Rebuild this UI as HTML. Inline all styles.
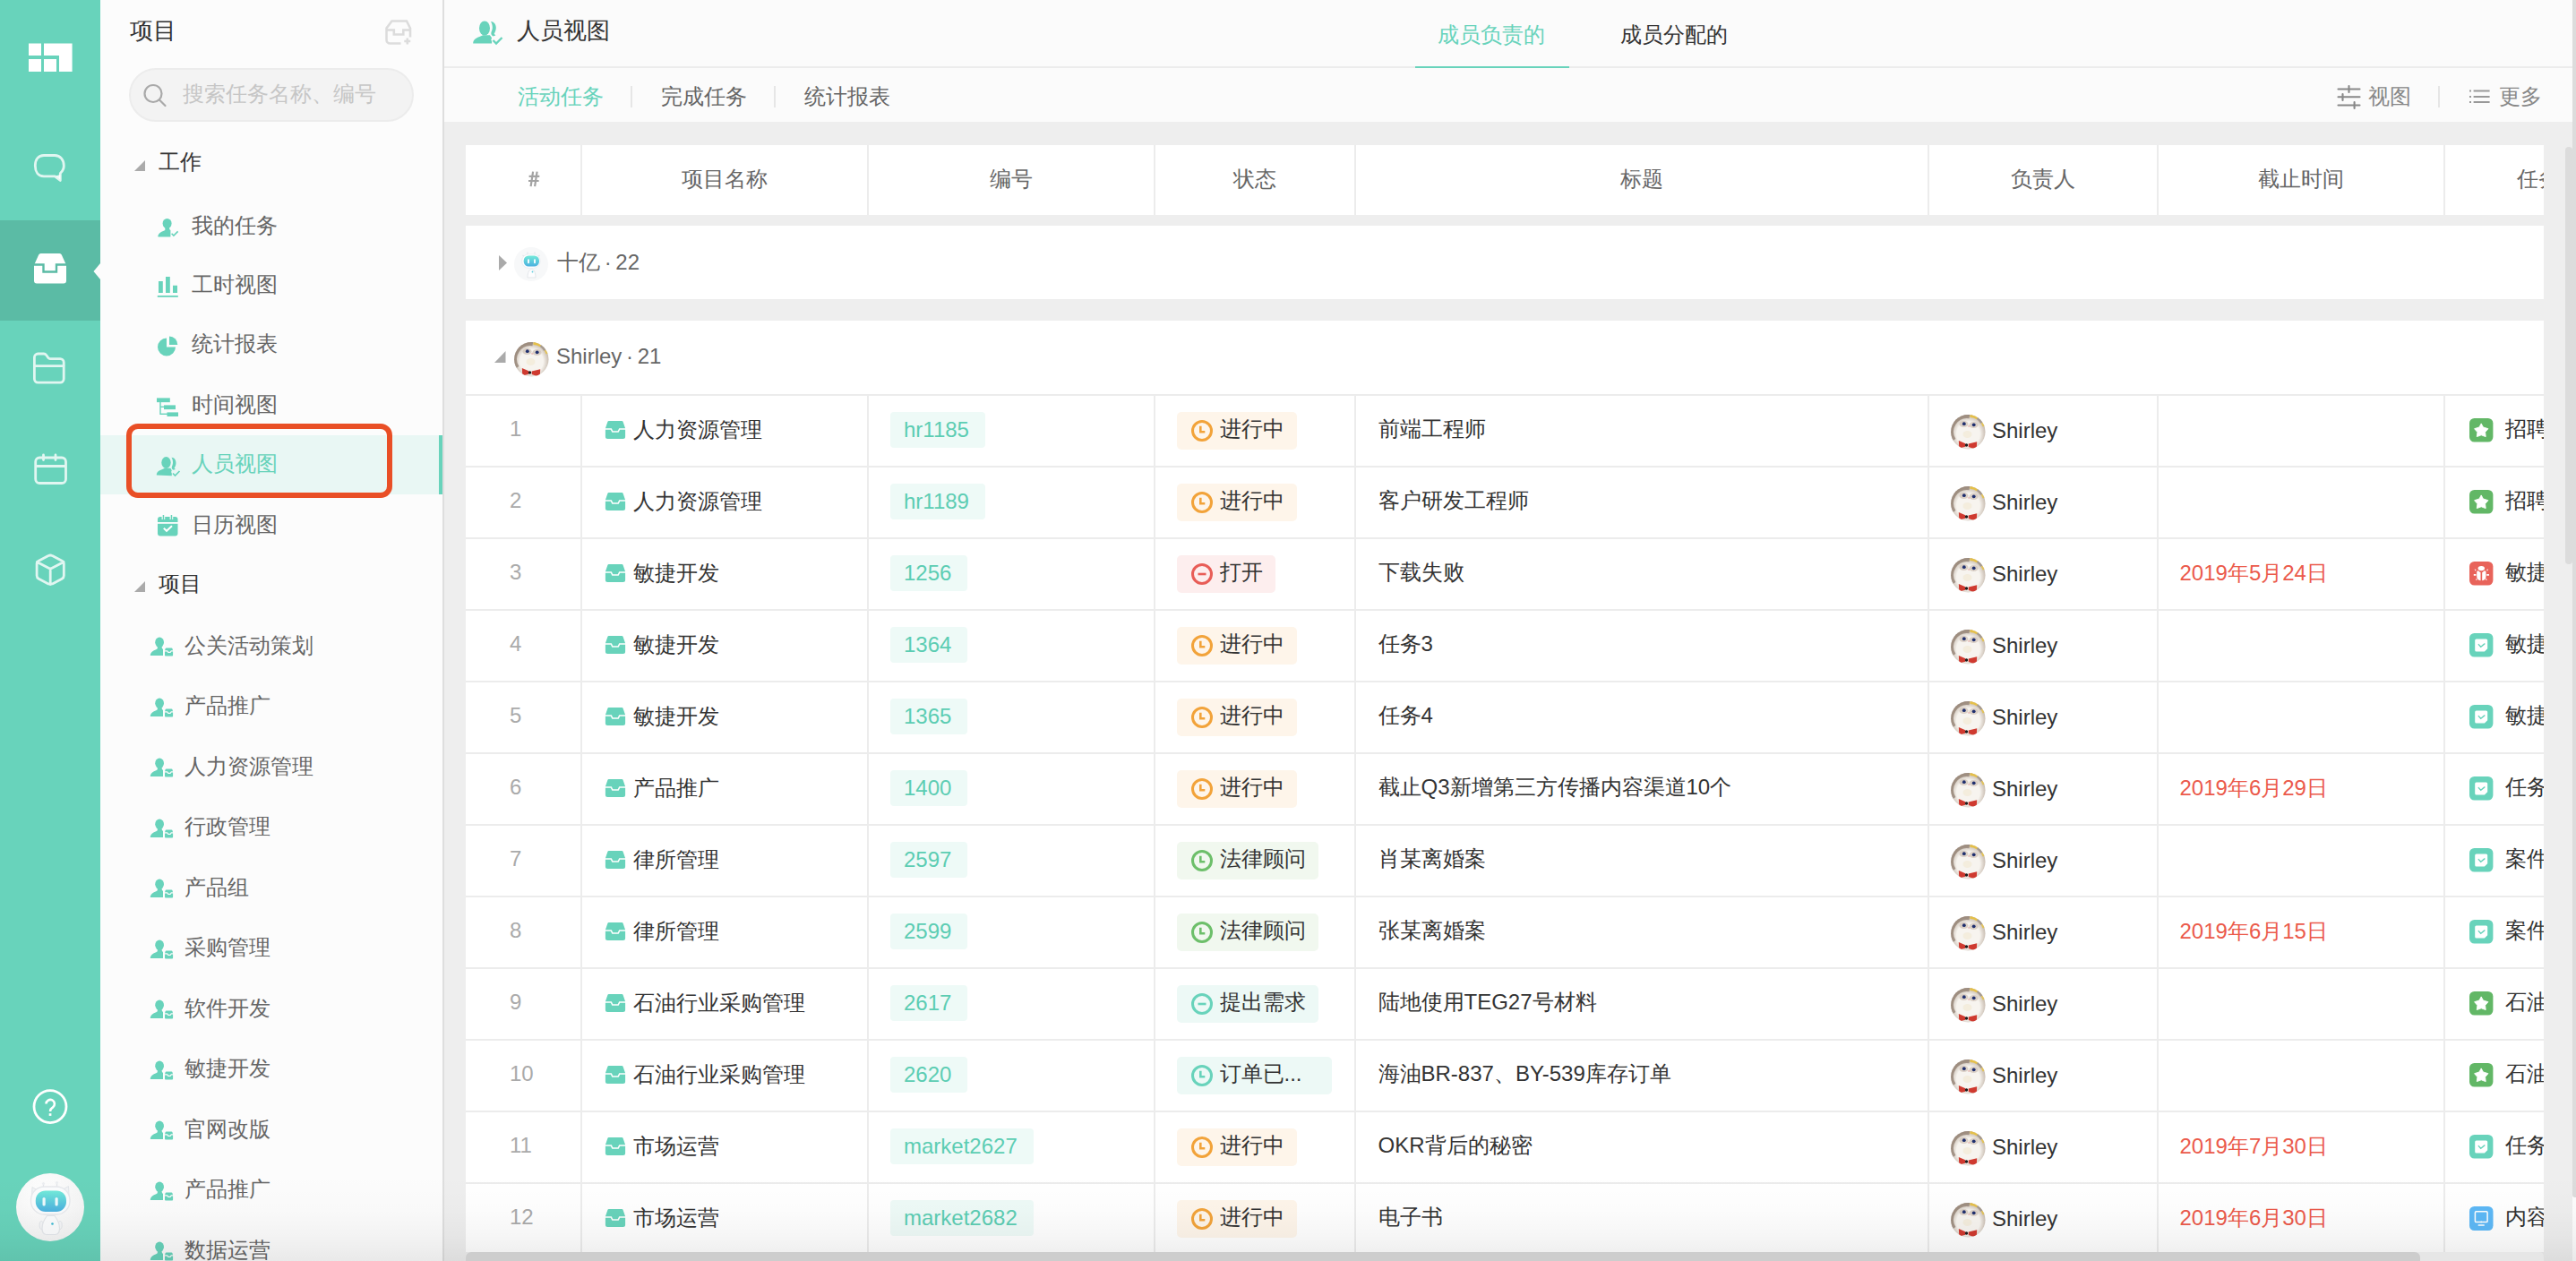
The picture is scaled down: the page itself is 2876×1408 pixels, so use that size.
<!DOCTYPE html><html><head><meta charset="utf-8"><style>
*{box-sizing:border-box;margin:0;padding:0}
html,body{width:2876px;height:1408px;overflow:hidden;background:#fcfcfc;font-family:"Liberation Sans",sans-serif;color:#333}
.a{position:absolute}
.t24{font-size:24px;line-height:22px;white-space:nowrap}
.t26{font-size:26px;line-height:26px;white-space:nowrap}
svg{position:absolute;overflow:visible}
</style></head><body>

<div class="a" style="left:0;top:0;width:112px;height:1408px;background:#68d3bb"></div>
<div class="a" style="left:0;top:246px;width:112px;height:112px;background:#5bbba5"></div>
<svg style="left:0;top:0" width="2876" height="1408"><polygon points="112,294 104.5,303 112,312" fill="#fcfcfc"/></svg>
<svg style="left:0;top:0" width="112" height="1408" fill="#fff">
<rect x="32" y="48.5" width="14" height="13.5"/><rect x="32" y="66" width="14" height="14"/>
<rect x="49" y="66" width="14" height="14"/><path d="M49 48.5H80.6V80H66V62H49Z"/>
</svg>
<svg style="left:0;top:0" width="112" height="1408"><path stroke="#fff" stroke-opacity="0.8" fill="none" stroke-width="2.8" stroke-linejoin="round" stroke-linecap="round" d="M49 173.5H61C67.5 173.5 71.3 178.5 71.3 185C71.3 188.5 70 191 67.3 193.5V201.5L61.3 196.8H49C42.5 196.8 39.3 191.5 39.3 185C39.3 178.5 42.5 173.5 49 173.5Z"/><path d="M62 196.5L67.3 200.5V195z" fill="#fff" fill-opacity="0.85"/></svg>
<svg style="left:0;top:0" width="112" height="1408"><path fill="#fff" d="M45.5 283h21a2.5 2.5 0 0 1 2.3 1.6l5.2 11.4v17.5a3 3 0 0 1-3 3h-30a3 3 0 0 1-3-3v-17.5l5.2-11.4a2.5 2.5 0 0 1 2.3-1.6z"/><path d="M37 295.5h11.5v8h14.5v-8h12" stroke="#5bbba5" stroke-width="2.4" fill="none"/></svg>
<svg style="left:0;top:0" width="112" height="1408"><path stroke="#fff" stroke-opacity="0.8" fill="none" stroke-width="2.8" stroke-linejoin="round" stroke-linecap="round" d="M38.4 399a4 4 0 0 1 4-4h6.5c1.3 0 2 .5 2.8 1.5l2.3 3.2c.5.6 1 .9 1.8.9h11.4a4 4 0 0 1 4 4v18.5a4 4 0 0 1-4 4h-24.8a4 4 0 0 1-4-4z M38.4 408.6h33"/></svg>
<svg style="left:0;top:0" width="112" height="1408"><path stroke="#fff" stroke-opacity="0.8" fill="none" stroke-width="2.8" stroke-linejoin="round" stroke-linecap="round" d="M39.7 515.5a4.5 4.5 0 0 1 4.5-4.5h24.8a4.5 4.5 0 0 1 4.5 4.5v19.5a4.5 4.5 0 0 1-4.5 4.5h-24.8a4.5 4.5 0 0 1-4.5-4.5z M39.7 520.5h33.5 M48.5 508v5.5 M62 508v5.5"/></svg>
<svg style="left:0;top:0" width="112" height="1408"><path stroke="#fff" stroke-opacity="0.8" fill="none" stroke-width="2.8" stroke-linejoin="round" stroke-linecap="round" d="M54 620.6a4.5 4.5 0 0 1 4.4 0l11.3 6a3 3 0 0 1 1.6 2.6v13.6a4 4 0 0 1-2.1 3.5l-10.8 5.6a4.5 4.5 0 0 1-4.4 0l-10.8-5.6a4 4 0 0 1-2.1-3.5v-13.6a3 3 0 0 1 1.6-2.6z M41.3 627.5l14.9 7.8l14.9-7.8 M56.2 635.3v16.2"/></svg>
<svg style="left:0;top:0" width="112" height="1408"><circle cx="56" cy="1235.6" r="18" stroke="#fff" stroke-width="2.8" fill="none"/><path d="M51.5 1232.6a4.7 4.7 0 1 1 7.5 3.8c-1.9 1.3-2.9 2.1-2.9 4v.6" stroke="#fff" stroke-width="2.6" fill="none"/><rect x="54.7" y="1243.2" width="2.7" height="2.7" fill="#fff"/></svg>
<svg style="left:0;top:0" width="112" height="1408"><defs><linearGradient id="vis2" x1="0" y1="0" x2="0" y2="1"><stop offset="0" stop-color="#72e9d9"/><stop offset="1" stop-color="#4cb0df"/></linearGradient><radialGradient id="rb" cx="40%" cy="35%" r="70%"><stop offset="0" stop-color="#ffffff"/><stop offset="1" stop-color="#f3f3f3"/></radialGradient></defs>
<circle cx="56" cy="1348" r="38" fill="url(#rb)"/>
<path d="M48.5 1327v-4.5M63.5 1326v-4.5" stroke="#e2e5e9" stroke-width="1.3"/><circle cx="48.5" cy="1321.5" r="1.6" fill="#eceef1"/><circle cx="63.5" cy="1320.5" r="1.6" fill="#eceef1"/>
<path d="M35.5 1336l0.5-10.5l8.5 5z" fill="#f1f3f5" stroke="#e3e6ea" stroke-width="1"/><path d="M77 1335l-0.5-10.5l-8.5 5z" fill="#f1f3f5" stroke="#e3e6ea" stroke-width="1"/>
<rect x="34.5" y="1325" width="43.5" height="31" rx="15" fill="#fbfcfd" stroke="#e6e8ec" stroke-width="1.3"/>
<rect x="39.8" y="1329.4" width="34.2" height="23.6" rx="11" fill="url(#vis2)"/>
<rect x="47.5" y="1337" width="3.2" height="9.5" rx="1.6" fill="#eefafc"/><rect x="61.5" y="1337" width="3.2" height="9.5" rx="1.6" fill="#eefafc"/>
<ellipse cx="46.3" cy="1368" rx="2.2" ry="4.5" fill="#f4f5f7" stroke="#e3e6ea" stroke-width="1"/><ellipse cx="67" cy="1368" rx="2.2" ry="4.5" fill="#f4f5f7" stroke="#e3e6ea" stroke-width="1"/>
<path d="M52.5 1357.5h8.5c3 4 5.5 9 5.5 14c0 4.5-2 7-5 7h-9.5c-3 0-5-2.5-5-7c0-5 2.5-10 5.5-14z" fill="#fbfcfd" stroke="#e3e6ea" stroke-width="1.2"/>
<circle cx="58.5" cy="1366.5" r="1.3" fill="#3bb8d2"/>
</svg>
<div class="a" style="left:494px;top:0;width:2px;height:1408px;background:#dedede"></div>
<div class="a t26" style="left:145px;top:20.5px;color:#333">项目</div>
<svg style="left:0;top:0" width="500" height="200"><path d="M431.5 41v-9.5l6-8h16.5l4 8v10 M431.5 41v3.5a4 4 0 0 0 4 4h12" stroke="#dcdcdc" stroke-width="2.6" fill="none"/><path d="M432 33.5h7.8v5h10.5v-5h7.5" stroke="#dcdcdc" stroke-width="2.6" fill="none"/><path d="M454.8 42.5v7 M451.3 46h7" stroke="#dcdcdc" stroke-width="2.6"/></svg>
<div class="a" style="left:144px;top:76px;width:318px;height:60px;border-radius:30px;background:#f3f3f3;border:2px solid #ececec"></div>
<svg style="left:0;top:0" width="500" height="200"><circle cx="171" cy="104.5" r="9.5" stroke="#a9a9a9" stroke-width="2.2" fill="none"/><path d="M178 111.5l6.5 6.5" stroke="#a9a9a9" stroke-width="2.2" stroke-linecap="round"/></svg>
<div class="a t24" style="left:204px;top:93.5px;color:#c6c6c6">搜索任务名称、编号</div>
<svg style="left:0;top:0" width="500" height="1408"><polygon points="162,179 162,191 150,191" fill="#aaaaaa"/></svg>
<div class="a t24" style="left:177px;top:170px;color:#333">工作</div>
<div class="a" style="left:112px;top:486px;width:382px;height:66px;background:#e9f7f4"></div>
<div class="a" style="left:490px;top:486px;width:4px;height:66px;background:#68d3bb"></div>
<div class="a t24" style="left:213.6px;top:241.1px;color:#666">我的任务</div>
<svg style="left:176px;top:244px" width="24" height="24" fill="#68d3bb"><ellipse cx="10.6" cy="5.5" rx="5" ry="5.5"/><path d="M8.3 9.8h4.6l.6 2.6l.9.7V20.6H1c-.6 0-.8-.5-.7-1c.8-3 3-4.6 6.5-5.8l1.5-.9z"/><path d="M15.6 16.8l2.3 2.3l4.7-4.7" stroke="#68d3bb" stroke-width="1.6" fill="none"/></svg>
<div class="a t24" style="left:213.6px;top:307.1px;color:#666">工时视图</div>
<svg style="left:176px;top:309px" width="24" height="24" fill="#68d3bb"><rect x="1" y="5" width="4.8" height="13"/><rect x="9" y="0" width="4.8" height="18"/><rect x="17" y="9.75" width="5" height="8.25"/><rect x="-0.2" y="21" width="23" height="1.8"/></svg>
<div class="a t24" style="left:213.6px;top:373.1px;color:#666">统计报表</div>
<svg style="left:176px;top:373.5px" width="24" height="24" fill="#68d3bb"><path d="M10 3.5v10h10a10 10 0 1 1-10-10z"/><path d="M13 1.5a9.5 9.5 0 0 1 9.3 9.5h-9.3z"/></svg>
<div class="a t24" style="left:213.6px;top:441.1px;color:#666">时间视图</div>
<svg style="left:176px;top:441.6px" width="24" height="24" fill="#68d3bb"><rect x="-1" y="2.4" width="14.8" height="4.75"/><rect x="2.3" y="6" width="1.4" height="15"/><rect x="3" y="11.6" width="5" height="1.4"/><rect x="7" y="10.4" width="13" height="4.7"/><rect x="3" y="19.6" width="8" height="1.4"/><rect x="10.5" y="18.4" width="12.5" height="4.6"/></svg>
<div class="a t24" style="left:213.6px;top:506.5px;color:#68d3bb">人员视图</div>
<svg style="left:175px;top:510px" width="26" height="24" fill="#68d3bb"><path d="M16.5 0.8c3 0 5 2.8 5 6.2c0 2.8-1.2 4.3-2 5.8l1.5 1.2l-2.5 0.8c-1.5-1-2.2-2-1.5-4c0.8-2 1-3 1-4.5c0-2-0.6-4-1.5-5.5z"/><ellipse cx="10.5" cy="6.5" rx="5.2" ry="6.5"/><path d="M-0.2 20.5c0-3.5 2.5-5 6-6.2l3-1.5h6.5l1.5 2.5l-0.7 1.8l0.7 1.5v2.7z"/><path d="M18 18.5l2.5 2.5l5-5" stroke="#68d3bb" stroke-width="1.7" fill="none"/></svg>
<div class="a t24" style="left:213.6px;top:575.0px;color:#666">日历视图</div>
<svg style="left:176px;top:575px" width="24" height="24"><path d="M0 5a3 3 0 0 1 3-3h16.5a3 3 0 0 1 3 3v15.5a3 3 0 0 1-3 3h-16.5a3 3 0 0 1-3-3z" fill="#68d3bb"/><rect x="-1" y="8" width="25" height="1.8" fill="#fcfcfc"/><rect x="4.6" y="-1" width="3.6" height="6" fill="#fcfcfc"/><rect x="13.6" y="-1" width="3.6" height="6" fill="#fcfcfc"/><rect x="5.7" y="0" width="1.5" height="5" fill="#68d3bb"/><rect x="14.7" y="0" width="1.5" height="5" fill="#68d3bb"/><path d="M6.8 14.8l3.2 3l6-5.5" stroke="#fff" stroke-width="2" fill="none"/></svg>
<div class="a" style="left:140.5px;top:473px;width:297px;height:83px;border:6px solid #e94f26;border-radius:13px"></div>
<svg style="left:0;top:0" width="500" height="1408"><polygon points="162,649 162,661 150,661" fill="#aaaaaa"/></svg>
<div class="a t24" style="left:177px;top:641px;color:#333">项目</div>
<div class="a t24" style="left:206px;top:709.5px;color:#666">公关活动策划</div>
<svg style="left:167px;top:711.0px" width="28" height="23" fill="#68d3bb"><ellipse cx="11.1" cy="6.2" rx="4.9" ry="5.6"/><path d="M8.8 10.5h4.6l.6 2.6l1 .8V21H1.5c-.6 0-.8-.5-.7-1c.8-3 3-4.6 6.5-5.8l1.5-.9z"/><path d="M18.6 12.4h5.9a1 1 0 0 1 .9.7l.7 2.5v5a.9.9 0 0 1-.9.9h-7.3a.9.9 0 0 1-.9-.9v-5l.7-2.5a1 1 0 0 1 .9-.7z"/><path d="M16.8 15.9h2.9l1.1 1.5h2.3l1.1-1.5h2.9" stroke="#fcfcfc" stroke-width="1.1" fill="none"/></svg>
<div class="a t24" style="left:206px;top:777.0px;color:#666">产品推广</div>
<svg style="left:167px;top:778.5px" width="28" height="23" fill="#68d3bb"><ellipse cx="11.1" cy="6.2" rx="4.9" ry="5.6"/><path d="M8.8 10.5h4.6l.6 2.6l1 .8V21H1.5c-.6 0-.8-.5-.7-1c.8-3 3-4.6 6.5-5.8l1.5-.9z"/><path d="M18.6 12.4h5.9a1 1 0 0 1 .9.7l.7 2.5v5a.9.9 0 0 1-.9.9h-7.3a.9.9 0 0 1-.9-.9v-5l.7-2.5a1 1 0 0 1 .9-.7z"/><path d="M16.8 15.9h2.9l1.1 1.5h2.3l1.1-1.5h2.9" stroke="#fcfcfc" stroke-width="1.1" fill="none"/></svg>
<div class="a t24" style="left:206px;top:844.5px;color:#666">人力资源管理</div>
<svg style="left:167px;top:846.0px" width="28" height="23" fill="#68d3bb"><ellipse cx="11.1" cy="6.2" rx="4.9" ry="5.6"/><path d="M8.8 10.5h4.6l.6 2.6l1 .8V21H1.5c-.6 0-.8-.5-.7-1c.8-3 3-4.6 6.5-5.8l1.5-.9z"/><path d="M18.6 12.4h5.9a1 1 0 0 1 .9.7l.7 2.5v5a.9.9 0 0 1-.9.9h-7.3a.9.9 0 0 1-.9-.9v-5l.7-2.5a1 1 0 0 1 .9-.7z"/><path d="M16.8 15.9h2.9l1.1 1.5h2.3l1.1-1.5h2.9" stroke="#fcfcfc" stroke-width="1.1" fill="none"/></svg>
<div class="a t24" style="left:206px;top:912.0px;color:#666">行政管理</div>
<svg style="left:167px;top:913.5px" width="28" height="23" fill="#68d3bb"><ellipse cx="11.1" cy="6.2" rx="4.9" ry="5.6"/><path d="M8.8 10.5h4.6l.6 2.6l1 .8V21H1.5c-.6 0-.8-.5-.7-1c.8-3 3-4.6 6.5-5.8l1.5-.9z"/><path d="M18.6 12.4h5.9a1 1 0 0 1 .9.7l.7 2.5v5a.9.9 0 0 1-.9.9h-7.3a.9.9 0 0 1-.9-.9v-5l.7-2.5a1 1 0 0 1 .9-.7z"/><path d="M16.8 15.9h2.9l1.1 1.5h2.3l1.1-1.5h2.9" stroke="#fcfcfc" stroke-width="1.1" fill="none"/></svg>
<div class="a t24" style="left:206px;top:979.5px;color:#666">产品组</div>
<svg style="left:167px;top:981.0px" width="28" height="23" fill="#68d3bb"><ellipse cx="11.1" cy="6.2" rx="4.9" ry="5.6"/><path d="M8.8 10.5h4.6l.6 2.6l1 .8V21H1.5c-.6 0-.8-.5-.7-1c.8-3 3-4.6 6.5-5.8l1.5-.9z"/><path d="M18.6 12.4h5.9a1 1 0 0 1 .9.7l.7 2.5v5a.9.9 0 0 1-.9.9h-7.3a.9.9 0 0 1-.9-.9v-5l.7-2.5a1 1 0 0 1 .9-.7z"/><path d="M16.8 15.9h2.9l1.1 1.5h2.3l1.1-1.5h2.9" stroke="#fcfcfc" stroke-width="1.1" fill="none"/></svg>
<div class="a t24" style="left:206px;top:1047.0px;color:#666">采购管理</div>
<svg style="left:167px;top:1048.5px" width="28" height="23" fill="#68d3bb"><ellipse cx="11.1" cy="6.2" rx="4.9" ry="5.6"/><path d="M8.8 10.5h4.6l.6 2.6l1 .8V21H1.5c-.6 0-.8-.5-.7-1c.8-3 3-4.6 6.5-5.8l1.5-.9z"/><path d="M18.6 12.4h5.9a1 1 0 0 1 .9.7l.7 2.5v5a.9.9 0 0 1-.9.9h-7.3a.9.9 0 0 1-.9-.9v-5l.7-2.5a1 1 0 0 1 .9-.7z"/><path d="M16.8 15.9h2.9l1.1 1.5h2.3l1.1-1.5h2.9" stroke="#fcfcfc" stroke-width="1.1" fill="none"/></svg>
<div class="a t24" style="left:206px;top:1114.5px;color:#666">软件开发</div>
<svg style="left:167px;top:1116.0px" width="28" height="23" fill="#68d3bb"><ellipse cx="11.1" cy="6.2" rx="4.9" ry="5.6"/><path d="M8.8 10.5h4.6l.6 2.6l1 .8V21H1.5c-.6 0-.8-.5-.7-1c.8-3 3-4.6 6.5-5.8l1.5-.9z"/><path d="M18.6 12.4h5.9a1 1 0 0 1 .9.7l.7 2.5v5a.9.9 0 0 1-.9.9h-7.3a.9.9 0 0 1-.9-.9v-5l.7-2.5a1 1 0 0 1 .9-.7z"/><path d="M16.8 15.9h2.9l1.1 1.5h2.3l1.1-1.5h2.9" stroke="#fcfcfc" stroke-width="1.1" fill="none"/></svg>
<div class="a t24" style="left:206px;top:1182.0px;color:#666">敏捷开发</div>
<svg style="left:167px;top:1183.5px" width="28" height="23" fill="#68d3bb"><ellipse cx="11.1" cy="6.2" rx="4.9" ry="5.6"/><path d="M8.8 10.5h4.6l.6 2.6l1 .8V21H1.5c-.6 0-.8-.5-.7-1c.8-3 3-4.6 6.5-5.8l1.5-.9z"/><path d="M18.6 12.4h5.9a1 1 0 0 1 .9.7l.7 2.5v5a.9.9 0 0 1-.9.9h-7.3a.9.9 0 0 1-.9-.9v-5l.7-2.5a1 1 0 0 1 .9-.7z"/><path d="M16.8 15.9h2.9l1.1 1.5h2.3l1.1-1.5h2.9" stroke="#fcfcfc" stroke-width="1.1" fill="none"/></svg>
<div class="a t24" style="left:206px;top:1249.5px;color:#666">官网改版</div>
<svg style="left:167px;top:1251.0px" width="28" height="23" fill="#68d3bb"><ellipse cx="11.1" cy="6.2" rx="4.9" ry="5.6"/><path d="M8.8 10.5h4.6l.6 2.6l1 .8V21H1.5c-.6 0-.8-.5-.7-1c.8-3 3-4.6 6.5-5.8l1.5-.9z"/><path d="M18.6 12.4h5.9a1 1 0 0 1 .9.7l.7 2.5v5a.9.9 0 0 1-.9.9h-7.3a.9.9 0 0 1-.9-.9v-5l.7-2.5a1 1 0 0 1 .9-.7z"/><path d="M16.8 15.9h2.9l1.1 1.5h2.3l1.1-1.5h2.9" stroke="#fcfcfc" stroke-width="1.1" fill="none"/></svg>
<div class="a t24" style="left:206px;top:1317.0px;color:#666">产品推广</div>
<svg style="left:167px;top:1318.5px" width="28" height="23" fill="#68d3bb"><ellipse cx="11.1" cy="6.2" rx="4.9" ry="5.6"/><path d="M8.8 10.5h4.6l.6 2.6l1 .8V21H1.5c-.6 0-.8-.5-.7-1c.8-3 3-4.6 6.5-5.8l1.5-.9z"/><path d="M18.6 12.4h5.9a1 1 0 0 1 .9.7l.7 2.5v5a.9.9 0 0 1-.9.9h-7.3a.9.9 0 0 1-.9-.9v-5l.7-2.5a1 1 0 0 1 .9-.7z"/><path d="M16.8 15.9h2.9l1.1 1.5h2.3l1.1-1.5h2.9" stroke="#fcfcfc" stroke-width="1.1" fill="none"/></svg>
<div class="a t24" style="left:206px;top:1384.5px;color:#666">数据运营</div>
<svg style="left:167px;top:1386.0px" width="28" height="23" fill="#68d3bb"><ellipse cx="11.1" cy="6.2" rx="4.9" ry="5.6"/><path d="M8.8 10.5h4.6l.6 2.6l1 .8V21H1.5c-.6 0-.8-.5-.7-1c.8-3 3-4.6 6.5-5.8l1.5-.9z"/><path d="M18.6 12.4h5.9a1 1 0 0 1 .9.7l.7 2.5v5a.9.9 0 0 1-.9.9h-7.3a.9.9 0 0 1-.9-.9v-5l.7-2.5a1 1 0 0 1 .9-.7z"/><path d="M16.8 15.9h2.9l1.1 1.5h2.3l1.1-1.5h2.9" stroke="#fcfcfc" stroke-width="1.1" fill="none"/></svg>
<div class="a" style="left:496px;top:0;width:2376px;height:136px;background:#fbfbfb"></div>
<div class="a" style="left:496px;top:74px;width:2380px;height:2px;background:#ececec"></div>
<svg style="left:527px;top:22px" width="36" height="30" fill="#68d3bb"><path d="M21 2c3.2 0 5.8 3 5.8 7c0 3-1.2 5-2.2 6.8l1.8 1.6l-3 1c-1.8-1.2-2.6-2.3-1.8-4.8c0.9-2.3 1.2-3.5 1.2-5.2c0-2.4-0.7-4.6-1.8-6.4z"/><ellipse cx="14" cy="9.5" rx="6" ry="8"/><path d="M1.2 26.5c0-4.2 3-6 7.2-7.5l3.8-1.8h7.7l2.2 3l-0.8 2l0.8 2v2.3z"/><path d="M23.5 23l3.5 3.5l6.5-6.5" stroke="#68d3bb" stroke-width="2.3" fill="none"/></svg>
<div class="a t26" style="left:576.5px;top:21px;color:#333">人员视图</div>
<div class="a t24" style="left:1605px;top:27.5px;color:#68d3bb">成员负责的</div>
<div class="a" style="left:1580px;top:74px;width:172px;height:2px;background:#68d3bb"></div>
<div class="a t24" style="left:1808.5px;top:27.5px;color:#333">成员分配的</div>
<div class="a t24" style="left:577.5px;top:97px;color:#68d3bb">活动任务</div>
<div class="a" style="left:704px;top:96px;width:2px;height:24px;background:#e6e6e6"></div>
<div class="a t24" style="left:738px;top:97px;color:#666">完成任务</div>
<div class="a" style="left:864px;top:96px;width:2px;height:24px;background:#e6e6e6"></div>
<div class="a t24" style="left:898px;top:97px;color:#666">统计报表</div>
<svg style="left:2600px;top:85px" width="60" height="45" stroke="#888" stroke-width="2.1" stroke-linecap="round"><path d="M10.5 14.5h24 M10.5 23.3h24 M10.5 32.5h24 M22.5 11v7 M15.5 20v7 M28.6 29v7"/></svg>
<div class="a t24" style="left:2644px;top:97px;color:#888">视图</div>
<div class="a" style="left:2722px;top:96px;width:2px;height:24px;background:#e6e6e6"></div>
<svg style="left:2750px;top:85px" width="40" height="45" stroke="#999" stroke-width="1.9"><path d="M7 16.5h2 M7 23h2 M7 29h2 M11.6 16.5h18 M11.6 23h18 M11.6 29h18"/></svg>
<div class="a t24" style="left:2790px;top:97px;color:#888">更多</div>
<div class="a" style="left:496px;top:136px;width:2376px;height:1272px;background:#eeeeee"></div>
<div class="a" style="left:2872px;top:0;width:4px;height:1337px;background:#dcdcdc;border-radius:0 0 0 3px"></div>
<div class="a" style="left:520px;top:0;width:2320px;height:1398px;overflow:hidden">
<div class="a" style="left:0;top:162px;width:2320px;height:78px;background:#fff"></div>
<div class="a" style="left:128px;top:162px;width:2px;height:78px;background:#ececec"></div><div class="a" style="left:448px;top:162px;width:2px;height:78px;background:#ececec"></div><div class="a" style="left:768px;top:162px;width:2px;height:78px;background:#ececec"></div><div class="a" style="left:992px;top:162px;width:2px;height:78px;background:#ececec"></div><div class="a" style="left:1632px;top:162px;width:2px;height:78px;background:#ececec"></div><div class="a" style="left:1888px;top:162px;width:2px;height:78px;background:#ececec"></div><div class="a" style="left:2208px;top:162px;width:2px;height:78px;background:#ececec"></div>
<svg style="left:70px;top:191px" width="14" height="20" stroke="#a3a3a3" stroke-width="2.2"><path d="M5.1 0.6L2.6 17.2M9.6 0.6L7.1 17.2M0.6 5.9H12.3M0 11H11.6"/></svg>
<div class="a t24" style="left:89px;top:189px;width:400px;text-align:center;color:#666;font-weight:400">项目名称</div>
<div class="a t24" style="left:409px;top:189px;width:400px;text-align:center;color:#666;font-weight:400">编号</div>
<div class="a t24" style="left:681px;top:189px;width:400px;text-align:center;color:#666;font-weight:400">状态</div>
<div class="a t24" style="left:1113px;top:189px;width:400px;text-align:center;color:#666;font-weight:400">标题</div>
<div class="a t24" style="left:1561px;top:189px;width:400px;text-align:center;color:#666;font-weight:400">负责人</div>
<div class="a t24" style="left:1849px;top:189px;width:400px;text-align:center;color:#666;font-weight:400">截止时间</div>
<div class="a t24" style="left:2138px;top:189px;width:400px;text-align:center;color:#666;font-weight:400">任务类型</div>
<div class="a" style="left:0;top:252px;width:2320px;height:82px;background:#fff"></div>
<svg style="left:37px;top:285px" width="10" height="18"><polygon points="0,0 9,8.5 0,17" fill="#aaa"/></svg>
<svg style="left:54px;top:276px" width="39" height="39"><defs><linearGradient id="vis" x1="0" y1="0" x2="0" y2="1"><stop offset="0" stop-color="#72e9d9"/><stop offset="1" stop-color="#4cb0df"/></linearGradient></defs><circle cx="19" cy="19" r="19" fill="#f7f8f9"/><path d="M9.5 9l3 2.5M28.5 9l-3 2.5M15 5.5v3M23 5.5v3" stroke="#e3e6ea" stroke-width="1.2"/><rect x="8.6" y="7.8" width="20.5" height="15.6" rx="7.5" fill="#fdfdfe" stroke="#eceef2" stroke-width="1"/><rect x="10.7" y="9.5" width="17.3" height="12" rx="5.5" fill="url(#vis)"/><rect x="15" y="13.3" width="2" height="5" rx="1" fill="#f2fbfd"/><rect x="22" y="13.3" width="2" height="5" rx="1" fill="#f2fbfd"/><path d="M15 34c0-6 2-9.5 4.5-9.5s4.5 3.5 4.5 9.5z" fill="#fdfdfe" stroke="#e4e7eb" stroke-width="1"/><circle cx="20.5" cy="27.5" r=".9" fill="#63cfe0"/></svg>
<div class="a t24" style="left:102px;top:281.5px;color:#666;word-spacing:-2px">十亿 · 22</div>
<div class="a" style="left:0;top:358px;width:2320px;height:82px;background:#fff"></div>
<svg style="left:32px;top:392px" width="13" height="14"><polygon points="12.5,0 12.5,13 0,13" fill="#aaa"/></svg>
<svg style="left:54px;top:380.5px" width="39" height="39" viewBox="0 0 39 39"><defs><clipPath id="cc54_380"><circle cx="19.3" cy="20.2" r="19.2"/></clipPath><filter id="fcc54_380"><feGaussianBlur stdDeviation="0.7"/></filter><radialGradient id="gcc54_380" cx="50%" cy="55%" r="55%"><stop offset="0.6" stop-color="#f7f4ef"/><stop offset="1" stop-color="#b9aa9c"/></radialGradient></defs><g clip-path="url(#cc54_380)"><rect width="39" height="41" fill="url(#gcc54_380)"/><g filter="url(#fcc54_380)"><path d="M2.5 30A18.5 18.5 0 0 1 21 1.8" stroke="#8a796b" stroke-width="7" fill="none" opacity=".7"/><path d="M21.5 1.8A18.5 18.5 0 0 1 30 4.2" stroke="#e5c04a" stroke-width="4.5" fill="none"/><path d="M30 4.5A18.5 18.5 0 0 1 35 10" stroke="#978a7e" stroke-width="4" fill="none" opacity=".7"/><path d="M35 10A18.5 18.5 0 0 1 37 14" stroke="#e2c35a" stroke-width="3" fill="none"/></g><ellipse cx="14.5" cy="11.5" rx="5" ry="3.6" fill="#cdbfb3" opacity=".7"/><ellipse cx="25.5" cy="12.5" rx="5" ry="3.6" fill="#cdbfb3" opacity=".7"/><ellipse cx="18.5" cy="23" rx="5" ry="4" fill="#efe4c8" opacity=".45"/><circle cx="14.8" cy="11.2" r="1.9" fill="#1f2f6e"/><circle cx="25.7" cy="12.3" r="1.9" fill="#1f2f6e"/><path d="M18.8 13.5h2.6l-1.3 1.6z" fill="#e59a98"/><path d="M8.8 30l7.5 3.2v3.6l-7 1.8z" fill="#cf3a30"/><path d="M29.2 31.2l-9.5 2.2v3.6l9 3z" fill="#cf3a30"/><circle cx="17.5" cy="35" r="1.7" fill="#1b1b1b"/></g></svg>
<div class="a t24" style="left:101px;top:387px;color:#666;word-spacing:-2px">Shirley · 21</div>
<div class="a" style="left:0;top:440px;width:2320px;height:2px;background:#ececec"></div>
<div class="a" style="left:0;top:442px;width:2320px;height:78px;background:#fff"></div>
<div class="a" style="left:128px;top:442px;width:2px;height:78px;background:#ececec"></div><div class="a" style="left:448px;top:442px;width:2px;height:78px;background:#ececec"></div><div class="a" style="left:768px;top:442px;width:2px;height:78px;background:#ececec"></div><div class="a" style="left:992px;top:442px;width:2px;height:78px;background:#ececec"></div><div class="a" style="left:1632px;top:442px;width:2px;height:78px;background:#ececec"></div><div class="a" style="left:1888px;top:442px;width:2px;height:78px;background:#ececec"></div><div class="a" style="left:2208px;top:442px;width:2px;height:78px;background:#ececec"></div>
<div class="a t24" style="left:49px;top:468px;color:#aaa">1</div>
<svg style="left:155px;top:470px" width="24" height="20" fill="#68d3bb"><path d="M3.3 1.2a1.6 1.6 0 0 1 1.5-1.2h14.4a1.6 1.6 0 0 1 1.5 1.2l2.4 7v9.3a2.5 2.5 0 0 1-2.5 2.5h-17.2a2.5 2.5 0 0 1-2.5-2.5v-9.3z"/><path d="M0 9h7.3l1.5 3h6.4l1.5-3h7.3" stroke="#fff" stroke-width="1.6" fill="none"/></svg>
<div class="a t24" style="left:187px;top:469px;color:#333">人力资源管理</div>
<div class="a t24" style="left:474px;top:460px;width:106px;height:40px;line-height:40px;border-radius:4px;background:#eefaf7;color:#5ccdb3;padding-left:15px">hr1185</div>
<div class="a" style="left:794px;top:460px;width:134px;height:42px;border-radius:5px;background:#fef5ea"></div>
<svg style="left:810px;top:468.5px" width="24" height="24"><circle cx="12" cy="12" r="10.5" stroke="#f2a33a" stroke-width="3" fill="none"/><path d="M10.3 6.8v6.4h5" stroke="#f2a33a" stroke-width="2.6" fill="none"/></svg>
<div class="a t24" style="left:841.5px;top:468px;color:#333">进行中</div>
<div class="a t24" style="left:1018.5px;top:468.2px;color:#333">前端工程师</div>
<svg style="left:1657.8000000000002px;top:461.5px" width="39" height="39" viewBox="0 0 39 39"><defs><clipPath id="cc1657_461"><circle cx="19.3" cy="20.2" r="19.2"/></clipPath><filter id="fcc1657_461"><feGaussianBlur stdDeviation="0.7"/></filter><radialGradient id="gcc1657_461" cx="50%" cy="55%" r="55%"><stop offset="0.6" stop-color="#f7f4ef"/><stop offset="1" stop-color="#b9aa9c"/></radialGradient></defs><g clip-path="url(#cc1657_461)"><rect width="39" height="41" fill="url(#gcc1657_461)"/><g filter="url(#fcc1657_461)"><path d="M2.5 30A18.5 18.5 0 0 1 21 1.8" stroke="#8a796b" stroke-width="7" fill="none" opacity=".7"/><path d="M21.5 1.8A18.5 18.5 0 0 1 30 4.2" stroke="#e5c04a" stroke-width="4.5" fill="none"/><path d="M30 4.5A18.5 18.5 0 0 1 35 10" stroke="#978a7e" stroke-width="4" fill="none" opacity=".7"/><path d="M35 10A18.5 18.5 0 0 1 37 14" stroke="#e2c35a" stroke-width="3" fill="none"/></g><ellipse cx="14.5" cy="11.5" rx="5" ry="3.6" fill="#cdbfb3" opacity=".7"/><ellipse cx="25.5" cy="12.5" rx="5" ry="3.6" fill="#cdbfb3" opacity=".7"/><ellipse cx="18.5" cy="23" rx="5" ry="4" fill="#efe4c8" opacity=".45"/><circle cx="14.8" cy="11.2" r="1.9" fill="#1f2f6e"/><circle cx="25.7" cy="12.3" r="1.9" fill="#1f2f6e"/><path d="M18.8 13.5h2.6l-1.3 1.6z" fill="#e59a98"/><path d="M8.8 30l7.5 3.2v3.6l-7 1.8z" fill="#cf3a30"/><path d="M29.2 31.2l-9.5 2.2v3.6l9 3z" fill="#cf3a30"/><circle cx="17.5" cy="35" r="1.7" fill="#1b1b1b"/></g></svg>
<div class="a t24" style="left:1704px;top:470px;color:#333">Shirley</div>
<svg style="left:2236.8px;top:467px" width="27" height="27"><rect width="26.4" height="26.5" rx="5.5" fill="#62b766"/><path d="M13.2 5.9L15.4 10L20.9 11.7L17.6 15.6L18.2 20.6L13.2 18.8L8.3 20.6L8.9 15.6L5.6 11.7L11 10Z" fill="#fff" stroke="#fff" stroke-width="0.9" stroke-linejoin="round"/></svg>
<div class="a t24" style="left:2276.5px;top:468px;color:#333">招聘需求</div>
<div class="a" style="left:0;top:520px;width:2320px;height:2px;background:#ececec"></div>
<div class="a" style="left:0;top:522px;width:2320px;height:78px;background:#fff"></div>
<div class="a" style="left:128px;top:522px;width:2px;height:78px;background:#ececec"></div><div class="a" style="left:448px;top:522px;width:2px;height:78px;background:#ececec"></div><div class="a" style="left:768px;top:522px;width:2px;height:78px;background:#ececec"></div><div class="a" style="left:992px;top:522px;width:2px;height:78px;background:#ececec"></div><div class="a" style="left:1632px;top:522px;width:2px;height:78px;background:#ececec"></div><div class="a" style="left:1888px;top:522px;width:2px;height:78px;background:#ececec"></div><div class="a" style="left:2208px;top:522px;width:2px;height:78px;background:#ececec"></div>
<div class="a t24" style="left:49px;top:548px;color:#aaa">2</div>
<svg style="left:155px;top:550px" width="24" height="20" fill="#68d3bb"><path d="M3.3 1.2a1.6 1.6 0 0 1 1.5-1.2h14.4a1.6 1.6 0 0 1 1.5 1.2l2.4 7v9.3a2.5 2.5 0 0 1-2.5 2.5h-17.2a2.5 2.5 0 0 1-2.5-2.5v-9.3z"/><path d="M0 9h7.3l1.5 3h6.4l1.5-3h7.3" stroke="#fff" stroke-width="1.6" fill="none"/></svg>
<div class="a t24" style="left:187px;top:549px;color:#333">人力资源管理</div>
<div class="a t24" style="left:474px;top:540px;width:106px;height:40px;line-height:40px;border-radius:4px;background:#eefaf7;color:#5ccdb3;padding-left:15px">hr1189</div>
<div class="a" style="left:794px;top:540px;width:134px;height:42px;border-radius:5px;background:#fef5ea"></div>
<svg style="left:810px;top:548.5px" width="24" height="24"><circle cx="12" cy="12" r="10.5" stroke="#f2a33a" stroke-width="3" fill="none"/><path d="M10.3 6.8v6.4h5" stroke="#f2a33a" stroke-width="2.6" fill="none"/></svg>
<div class="a t24" style="left:841.5px;top:548px;color:#333">进行中</div>
<div class="a t24" style="left:1018.5px;top:548.2px;color:#333">客户研发工程师</div>
<svg style="left:1657.8000000000002px;top:541.5px" width="39" height="39" viewBox="0 0 39 39"><defs><clipPath id="cc1657_541"><circle cx="19.3" cy="20.2" r="19.2"/></clipPath><filter id="fcc1657_541"><feGaussianBlur stdDeviation="0.7"/></filter><radialGradient id="gcc1657_541" cx="50%" cy="55%" r="55%"><stop offset="0.6" stop-color="#f7f4ef"/><stop offset="1" stop-color="#b9aa9c"/></radialGradient></defs><g clip-path="url(#cc1657_541)"><rect width="39" height="41" fill="url(#gcc1657_541)"/><g filter="url(#fcc1657_541)"><path d="M2.5 30A18.5 18.5 0 0 1 21 1.8" stroke="#8a796b" stroke-width="7" fill="none" opacity=".7"/><path d="M21.5 1.8A18.5 18.5 0 0 1 30 4.2" stroke="#e5c04a" stroke-width="4.5" fill="none"/><path d="M30 4.5A18.5 18.5 0 0 1 35 10" stroke="#978a7e" stroke-width="4" fill="none" opacity=".7"/><path d="M35 10A18.5 18.5 0 0 1 37 14" stroke="#e2c35a" stroke-width="3" fill="none"/></g><ellipse cx="14.5" cy="11.5" rx="5" ry="3.6" fill="#cdbfb3" opacity=".7"/><ellipse cx="25.5" cy="12.5" rx="5" ry="3.6" fill="#cdbfb3" opacity=".7"/><ellipse cx="18.5" cy="23" rx="5" ry="4" fill="#efe4c8" opacity=".45"/><circle cx="14.8" cy="11.2" r="1.9" fill="#1f2f6e"/><circle cx="25.7" cy="12.3" r="1.9" fill="#1f2f6e"/><path d="M18.8 13.5h2.6l-1.3 1.6z" fill="#e59a98"/><path d="M8.8 30l7.5 3.2v3.6l-7 1.8z" fill="#cf3a30"/><path d="M29.2 31.2l-9.5 2.2v3.6l9 3z" fill="#cf3a30"/><circle cx="17.5" cy="35" r="1.7" fill="#1b1b1b"/></g></svg>
<div class="a t24" style="left:1704px;top:550px;color:#333">Shirley</div>
<svg style="left:2236.8px;top:547px" width="27" height="27"><rect width="26.4" height="26.5" rx="5.5" fill="#62b766"/><path d="M13.2 5.9L15.4 10L20.9 11.7L17.6 15.6L18.2 20.6L13.2 18.8L8.3 20.6L8.9 15.6L5.6 11.7L11 10Z" fill="#fff" stroke="#fff" stroke-width="0.9" stroke-linejoin="round"/></svg>
<div class="a t24" style="left:2276.5px;top:548px;color:#333">招聘需求</div>
<div class="a" style="left:0;top:600px;width:2320px;height:2px;background:#ececec"></div>
<div class="a" style="left:0;top:602px;width:2320px;height:78px;background:#fff"></div>
<div class="a" style="left:128px;top:602px;width:2px;height:78px;background:#ececec"></div><div class="a" style="left:448px;top:602px;width:2px;height:78px;background:#ececec"></div><div class="a" style="left:768px;top:602px;width:2px;height:78px;background:#ececec"></div><div class="a" style="left:992px;top:602px;width:2px;height:78px;background:#ececec"></div><div class="a" style="left:1632px;top:602px;width:2px;height:78px;background:#ececec"></div><div class="a" style="left:1888px;top:602px;width:2px;height:78px;background:#ececec"></div><div class="a" style="left:2208px;top:602px;width:2px;height:78px;background:#ececec"></div>
<div class="a t24" style="left:49px;top:628px;color:#aaa">3</div>
<svg style="left:155px;top:630px" width="24" height="20" fill="#68d3bb"><path d="M3.3 1.2a1.6 1.6 0 0 1 1.5-1.2h14.4a1.6 1.6 0 0 1 1.5 1.2l2.4 7v9.3a2.5 2.5 0 0 1-2.5 2.5h-17.2a2.5 2.5 0 0 1-2.5-2.5v-9.3z"/><path d="M0 9h7.3l1.5 3h6.4l1.5-3h7.3" stroke="#fff" stroke-width="1.6" fill="none"/></svg>
<div class="a t24" style="left:187px;top:629px;color:#333">敏捷开发</div>
<div class="a t24" style="left:474px;top:620px;width:86px;height:40px;line-height:40px;border-radius:4px;background:#eefaf7;color:#5ccdb3;padding-left:15px">1256</div>
<div class="a" style="left:794px;top:620px;width:110px;height:42px;border-radius:5px;background:#fdeeee"></div>
<svg style="left:810px;top:628.5px" width="24" height="24"><circle cx="12" cy="12" r="10.5" stroke="#e85d57" stroke-width="3" fill="none"/><path d="M7.5 12h9" stroke="#e85d57" stroke-width="2.6"/></svg>
<div class="a t24" style="left:841.5px;top:628px;color:#333">打开</div>
<div class="a t24" style="left:1018.5px;top:628.2px;color:#333">下载失败</div>
<svg style="left:1657.8000000000002px;top:621.5px" width="39" height="39" viewBox="0 0 39 39"><defs><clipPath id="cc1657_621"><circle cx="19.3" cy="20.2" r="19.2"/></clipPath><filter id="fcc1657_621"><feGaussianBlur stdDeviation="0.7"/></filter><radialGradient id="gcc1657_621" cx="50%" cy="55%" r="55%"><stop offset="0.6" stop-color="#f7f4ef"/><stop offset="1" stop-color="#b9aa9c"/></radialGradient></defs><g clip-path="url(#cc1657_621)"><rect width="39" height="41" fill="url(#gcc1657_621)"/><g filter="url(#fcc1657_621)"><path d="M2.5 30A18.5 18.5 0 0 1 21 1.8" stroke="#8a796b" stroke-width="7" fill="none" opacity=".7"/><path d="M21.5 1.8A18.5 18.5 0 0 1 30 4.2" stroke="#e5c04a" stroke-width="4.5" fill="none"/><path d="M30 4.5A18.5 18.5 0 0 1 35 10" stroke="#978a7e" stroke-width="4" fill="none" opacity=".7"/><path d="M35 10A18.5 18.5 0 0 1 37 14" stroke="#e2c35a" stroke-width="3" fill="none"/></g><ellipse cx="14.5" cy="11.5" rx="5" ry="3.6" fill="#cdbfb3" opacity=".7"/><ellipse cx="25.5" cy="12.5" rx="5" ry="3.6" fill="#cdbfb3" opacity=".7"/><ellipse cx="18.5" cy="23" rx="5" ry="4" fill="#efe4c8" opacity=".45"/><circle cx="14.8" cy="11.2" r="1.9" fill="#1f2f6e"/><circle cx="25.7" cy="12.3" r="1.9" fill="#1f2f6e"/><path d="M18.8 13.5h2.6l-1.3 1.6z" fill="#e59a98"/><path d="M8.8 30l7.5 3.2v3.6l-7 1.8z" fill="#cf3a30"/><path d="M29.2 31.2l-9.5 2.2v3.6l9 3z" fill="#cf3a30"/><circle cx="17.5" cy="35" r="1.7" fill="#1b1b1b"/></g></svg>
<div class="a t24" style="left:1704px;top:630px;color:#333">Shirley</div>
<div class="a t24" style="left:1913.5px;top:629px;color:#eb5a4b">2019年5月24日</div>
<svg style="left:2236.8px;top:627px" width="27" height="27"><rect width="26.4" height="26.5" rx="5.5" fill="#e8635a"/><g fill="#fff"><ellipse cx="13.3" cy="7.6" rx="3.7" ry="2.7"/><path d="M8.2 11.8Q8.3 10 9.8 10.3L12.5 12.2V21.3Q8.2 20.8 8.2 16.5z"/><path d="M18.5 11.8Q18.4 10 16.9 10.3L14.2 12.2V21.3Q18.5 20.8 18.5 16.5z"/><path d="M5.6 8.6l2 .3l-.9 1.9z"/><path d="M21.1 8.6l-2 .3l.9 1.9z"/><rect x="4.8" y="14" width="2.6" height="1.8"/><rect x="19.3" y="14" width="2.6" height="1.8"/><path d="M6.9 20.7l1.9-.2l-.9-1.7z"/><path d="M19.8 20.7l-1.9-.2l.9-1.7z"/></g></svg>
<div class="a t24" style="left:2276.5px;top:628px;color:#333">敏捷缺陷</div>
<div class="a" style="left:0;top:680px;width:2320px;height:2px;background:#ececec"></div>
<div class="a" style="left:0;top:682px;width:2320px;height:78px;background:#fff"></div>
<div class="a" style="left:128px;top:682px;width:2px;height:78px;background:#ececec"></div><div class="a" style="left:448px;top:682px;width:2px;height:78px;background:#ececec"></div><div class="a" style="left:768px;top:682px;width:2px;height:78px;background:#ececec"></div><div class="a" style="left:992px;top:682px;width:2px;height:78px;background:#ececec"></div><div class="a" style="left:1632px;top:682px;width:2px;height:78px;background:#ececec"></div><div class="a" style="left:1888px;top:682px;width:2px;height:78px;background:#ececec"></div><div class="a" style="left:2208px;top:682px;width:2px;height:78px;background:#ececec"></div>
<div class="a t24" style="left:49px;top:708px;color:#aaa">4</div>
<svg style="left:155px;top:710px" width="24" height="20" fill="#68d3bb"><path d="M3.3 1.2a1.6 1.6 0 0 1 1.5-1.2h14.4a1.6 1.6 0 0 1 1.5 1.2l2.4 7v9.3a2.5 2.5 0 0 1-2.5 2.5h-17.2a2.5 2.5 0 0 1-2.5-2.5v-9.3z"/><path d="M0 9h7.3l1.5 3h6.4l1.5-3h7.3" stroke="#fff" stroke-width="1.6" fill="none"/></svg>
<div class="a t24" style="left:187px;top:709px;color:#333">敏捷开发</div>
<div class="a t24" style="left:474px;top:700px;width:86px;height:40px;line-height:40px;border-radius:4px;background:#eefaf7;color:#5ccdb3;padding-left:15px">1364</div>
<div class="a" style="left:794px;top:700px;width:134px;height:42px;border-radius:5px;background:#fef5ea"></div>
<svg style="left:810px;top:708.5px" width="24" height="24"><circle cx="12" cy="12" r="10.5" stroke="#f2a33a" stroke-width="3" fill="none"/><path d="M10.3 6.8v6.4h5" stroke="#f2a33a" stroke-width="2.6" fill="none"/></svg>
<div class="a t24" style="left:841.5px;top:708px;color:#333">进行中</div>
<div class="a t24" style="left:1018.5px;top:708.2px;color:#333">任务3</div>
<svg style="left:1657.8000000000002px;top:701.5px" width="39" height="39" viewBox="0 0 39 39"><defs><clipPath id="cc1657_701"><circle cx="19.3" cy="20.2" r="19.2"/></clipPath><filter id="fcc1657_701"><feGaussianBlur stdDeviation="0.7"/></filter><radialGradient id="gcc1657_701" cx="50%" cy="55%" r="55%"><stop offset="0.6" stop-color="#f7f4ef"/><stop offset="1" stop-color="#b9aa9c"/></radialGradient></defs><g clip-path="url(#cc1657_701)"><rect width="39" height="41" fill="url(#gcc1657_701)"/><g filter="url(#fcc1657_701)"><path d="M2.5 30A18.5 18.5 0 0 1 21 1.8" stroke="#8a796b" stroke-width="7" fill="none" opacity=".7"/><path d="M21.5 1.8A18.5 18.5 0 0 1 30 4.2" stroke="#e5c04a" stroke-width="4.5" fill="none"/><path d="M30 4.5A18.5 18.5 0 0 1 35 10" stroke="#978a7e" stroke-width="4" fill="none" opacity=".7"/><path d="M35 10A18.5 18.5 0 0 1 37 14" stroke="#e2c35a" stroke-width="3" fill="none"/></g><ellipse cx="14.5" cy="11.5" rx="5" ry="3.6" fill="#cdbfb3" opacity=".7"/><ellipse cx="25.5" cy="12.5" rx="5" ry="3.6" fill="#cdbfb3" opacity=".7"/><ellipse cx="18.5" cy="23" rx="5" ry="4" fill="#efe4c8" opacity=".45"/><circle cx="14.8" cy="11.2" r="1.9" fill="#1f2f6e"/><circle cx="25.7" cy="12.3" r="1.9" fill="#1f2f6e"/><path d="M18.8 13.5h2.6l-1.3 1.6z" fill="#e59a98"/><path d="M8.8 30l7.5 3.2v3.6l-7 1.8z" fill="#cf3a30"/><path d="M29.2 31.2l-9.5 2.2v3.6l9 3z" fill="#cf3a30"/><circle cx="17.5" cy="35" r="1.7" fill="#1b1b1b"/></g></svg>
<div class="a t24" style="left:1704px;top:710px;color:#333">Shirley</div>
<svg style="left:2236.8px;top:707px" width="27" height="27"><rect width="26.4" height="26.5" rx="5.5" fill="#68d3bb"/><path d="M7.7 6.5h11a1.5 1.5 0 0 1 1.5 1.5v9.2l-3.3 3.3h-9.2a1.5 1.5 0 0 1-1.5-1.5v-11a1.5 1.5 0 0 1 1.5-1.5z" fill="#fff"/><path d="M10.3 12.6l2.4 2.6l4.2-3.3" stroke="#68d3bb" stroke-width="1.4" fill="none" stroke-linecap="round"/></svg>
<div class="a t24" style="left:2276.5px;top:708px;color:#333">敏捷任务</div>
<div class="a" style="left:0;top:760px;width:2320px;height:2px;background:#ececec"></div>
<div class="a" style="left:0;top:762px;width:2320px;height:78px;background:#fff"></div>
<div class="a" style="left:128px;top:762px;width:2px;height:78px;background:#ececec"></div><div class="a" style="left:448px;top:762px;width:2px;height:78px;background:#ececec"></div><div class="a" style="left:768px;top:762px;width:2px;height:78px;background:#ececec"></div><div class="a" style="left:992px;top:762px;width:2px;height:78px;background:#ececec"></div><div class="a" style="left:1632px;top:762px;width:2px;height:78px;background:#ececec"></div><div class="a" style="left:1888px;top:762px;width:2px;height:78px;background:#ececec"></div><div class="a" style="left:2208px;top:762px;width:2px;height:78px;background:#ececec"></div>
<div class="a t24" style="left:49px;top:788px;color:#aaa">5</div>
<svg style="left:155px;top:790px" width="24" height="20" fill="#68d3bb"><path d="M3.3 1.2a1.6 1.6 0 0 1 1.5-1.2h14.4a1.6 1.6 0 0 1 1.5 1.2l2.4 7v9.3a2.5 2.5 0 0 1-2.5 2.5h-17.2a2.5 2.5 0 0 1-2.5-2.5v-9.3z"/><path d="M0 9h7.3l1.5 3h6.4l1.5-3h7.3" stroke="#fff" stroke-width="1.6" fill="none"/></svg>
<div class="a t24" style="left:187px;top:789px;color:#333">敏捷开发</div>
<div class="a t24" style="left:474px;top:780px;width:86px;height:40px;line-height:40px;border-radius:4px;background:#eefaf7;color:#5ccdb3;padding-left:15px">1365</div>
<div class="a" style="left:794px;top:780px;width:134px;height:42px;border-radius:5px;background:#fef5ea"></div>
<svg style="left:810px;top:788.5px" width="24" height="24"><circle cx="12" cy="12" r="10.5" stroke="#f2a33a" stroke-width="3" fill="none"/><path d="M10.3 6.8v6.4h5" stroke="#f2a33a" stroke-width="2.6" fill="none"/></svg>
<div class="a t24" style="left:841.5px;top:788px;color:#333">进行中</div>
<div class="a t24" style="left:1018.5px;top:788.2px;color:#333">任务4</div>
<svg style="left:1657.8000000000002px;top:781.5px" width="39" height="39" viewBox="0 0 39 39"><defs><clipPath id="cc1657_781"><circle cx="19.3" cy="20.2" r="19.2"/></clipPath><filter id="fcc1657_781"><feGaussianBlur stdDeviation="0.7"/></filter><radialGradient id="gcc1657_781" cx="50%" cy="55%" r="55%"><stop offset="0.6" stop-color="#f7f4ef"/><stop offset="1" stop-color="#b9aa9c"/></radialGradient></defs><g clip-path="url(#cc1657_781)"><rect width="39" height="41" fill="url(#gcc1657_781)"/><g filter="url(#fcc1657_781)"><path d="M2.5 30A18.5 18.5 0 0 1 21 1.8" stroke="#8a796b" stroke-width="7" fill="none" opacity=".7"/><path d="M21.5 1.8A18.5 18.5 0 0 1 30 4.2" stroke="#e5c04a" stroke-width="4.5" fill="none"/><path d="M30 4.5A18.5 18.5 0 0 1 35 10" stroke="#978a7e" stroke-width="4" fill="none" opacity=".7"/><path d="M35 10A18.5 18.5 0 0 1 37 14" stroke="#e2c35a" stroke-width="3" fill="none"/></g><ellipse cx="14.5" cy="11.5" rx="5" ry="3.6" fill="#cdbfb3" opacity=".7"/><ellipse cx="25.5" cy="12.5" rx="5" ry="3.6" fill="#cdbfb3" opacity=".7"/><ellipse cx="18.5" cy="23" rx="5" ry="4" fill="#efe4c8" opacity=".45"/><circle cx="14.8" cy="11.2" r="1.9" fill="#1f2f6e"/><circle cx="25.7" cy="12.3" r="1.9" fill="#1f2f6e"/><path d="M18.8 13.5h2.6l-1.3 1.6z" fill="#e59a98"/><path d="M8.8 30l7.5 3.2v3.6l-7 1.8z" fill="#cf3a30"/><path d="M29.2 31.2l-9.5 2.2v3.6l9 3z" fill="#cf3a30"/><circle cx="17.5" cy="35" r="1.7" fill="#1b1b1b"/></g></svg>
<div class="a t24" style="left:1704px;top:790px;color:#333">Shirley</div>
<svg style="left:2236.8px;top:787px" width="27" height="27"><rect width="26.4" height="26.5" rx="5.5" fill="#68d3bb"/><path d="M7.7 6.5h11a1.5 1.5 0 0 1 1.5 1.5v9.2l-3.3 3.3h-9.2a1.5 1.5 0 0 1-1.5-1.5v-11a1.5 1.5 0 0 1 1.5-1.5z" fill="#fff"/><path d="M10.3 12.6l2.4 2.6l4.2-3.3" stroke="#68d3bb" stroke-width="1.4" fill="none" stroke-linecap="round"/></svg>
<div class="a t24" style="left:2276.5px;top:788px;color:#333">敏捷任务</div>
<div class="a" style="left:0;top:840px;width:2320px;height:2px;background:#ececec"></div>
<div class="a" style="left:0;top:842px;width:2320px;height:78px;background:#fff"></div>
<div class="a" style="left:128px;top:842px;width:2px;height:78px;background:#ececec"></div><div class="a" style="left:448px;top:842px;width:2px;height:78px;background:#ececec"></div><div class="a" style="left:768px;top:842px;width:2px;height:78px;background:#ececec"></div><div class="a" style="left:992px;top:842px;width:2px;height:78px;background:#ececec"></div><div class="a" style="left:1632px;top:842px;width:2px;height:78px;background:#ececec"></div><div class="a" style="left:1888px;top:842px;width:2px;height:78px;background:#ececec"></div><div class="a" style="left:2208px;top:842px;width:2px;height:78px;background:#ececec"></div>
<div class="a t24" style="left:49px;top:868px;color:#aaa">6</div>
<svg style="left:155px;top:870px" width="24" height="20" fill="#68d3bb"><path d="M3.3 1.2a1.6 1.6 0 0 1 1.5-1.2h14.4a1.6 1.6 0 0 1 1.5 1.2l2.4 7v9.3a2.5 2.5 0 0 1-2.5 2.5h-17.2a2.5 2.5 0 0 1-2.5-2.5v-9.3z"/><path d="M0 9h7.3l1.5 3h6.4l1.5-3h7.3" stroke="#fff" stroke-width="1.6" fill="none"/></svg>
<div class="a t24" style="left:187px;top:869px;color:#333">产品推广</div>
<div class="a t24" style="left:474px;top:860px;width:86px;height:40px;line-height:40px;border-radius:4px;background:#eefaf7;color:#5ccdb3;padding-left:15px">1400</div>
<div class="a" style="left:794px;top:860px;width:134px;height:42px;border-radius:5px;background:#fef5ea"></div>
<svg style="left:810px;top:868.5px" width="24" height="24"><circle cx="12" cy="12" r="10.5" stroke="#f2a33a" stroke-width="3" fill="none"/><path d="M10.3 6.8v6.4h5" stroke="#f2a33a" stroke-width="2.6" fill="none"/></svg>
<div class="a t24" style="left:841.5px;top:868px;color:#333">进行中</div>
<div class="a t24" style="left:1018.5px;top:868.2px;color:#333">截止Q3新增第三方传播内容渠道10个</div>
<svg style="left:1657.8000000000002px;top:861.5px" width="39" height="39" viewBox="0 0 39 39"><defs><clipPath id="cc1657_861"><circle cx="19.3" cy="20.2" r="19.2"/></clipPath><filter id="fcc1657_861"><feGaussianBlur stdDeviation="0.7"/></filter><radialGradient id="gcc1657_861" cx="50%" cy="55%" r="55%"><stop offset="0.6" stop-color="#f7f4ef"/><stop offset="1" stop-color="#b9aa9c"/></radialGradient></defs><g clip-path="url(#cc1657_861)"><rect width="39" height="41" fill="url(#gcc1657_861)"/><g filter="url(#fcc1657_861)"><path d="M2.5 30A18.5 18.5 0 0 1 21 1.8" stroke="#8a796b" stroke-width="7" fill="none" opacity=".7"/><path d="M21.5 1.8A18.5 18.5 0 0 1 30 4.2" stroke="#e5c04a" stroke-width="4.5" fill="none"/><path d="M30 4.5A18.5 18.5 0 0 1 35 10" stroke="#978a7e" stroke-width="4" fill="none" opacity=".7"/><path d="M35 10A18.5 18.5 0 0 1 37 14" stroke="#e2c35a" stroke-width="3" fill="none"/></g><ellipse cx="14.5" cy="11.5" rx="5" ry="3.6" fill="#cdbfb3" opacity=".7"/><ellipse cx="25.5" cy="12.5" rx="5" ry="3.6" fill="#cdbfb3" opacity=".7"/><ellipse cx="18.5" cy="23" rx="5" ry="4" fill="#efe4c8" opacity=".45"/><circle cx="14.8" cy="11.2" r="1.9" fill="#1f2f6e"/><circle cx="25.7" cy="12.3" r="1.9" fill="#1f2f6e"/><path d="M18.8 13.5h2.6l-1.3 1.6z" fill="#e59a98"/><path d="M8.8 30l7.5 3.2v3.6l-7 1.8z" fill="#cf3a30"/><path d="M29.2 31.2l-9.5 2.2v3.6l9 3z" fill="#cf3a30"/><circle cx="17.5" cy="35" r="1.7" fill="#1b1b1b"/></g></svg>
<div class="a t24" style="left:1704px;top:870px;color:#333">Shirley</div>
<div class="a t24" style="left:1913.5px;top:869px;color:#eb5a4b">2019年6月29日</div>
<svg style="left:2236.8px;top:867px" width="27" height="27"><rect width="26.4" height="26.5" rx="5.5" fill="#68d3bb"/><path d="M7.7 6.5h11a1.5 1.5 0 0 1 1.5 1.5v9.2l-3.3 3.3h-9.2a1.5 1.5 0 0 1-1.5-1.5v-11a1.5 1.5 0 0 1 1.5-1.5z" fill="#fff"/><path d="M10.3 12.6l2.4 2.6l4.2-3.3" stroke="#68d3bb" stroke-width="1.4" fill="none" stroke-linecap="round"/></svg>
<div class="a t24" style="left:2276.5px;top:868px;color:#333">任务</div>
<div class="a" style="left:0;top:920px;width:2320px;height:2px;background:#ececec"></div>
<div class="a" style="left:0;top:922px;width:2320px;height:78px;background:#fff"></div>
<div class="a" style="left:128px;top:922px;width:2px;height:78px;background:#ececec"></div><div class="a" style="left:448px;top:922px;width:2px;height:78px;background:#ececec"></div><div class="a" style="left:768px;top:922px;width:2px;height:78px;background:#ececec"></div><div class="a" style="left:992px;top:922px;width:2px;height:78px;background:#ececec"></div><div class="a" style="left:1632px;top:922px;width:2px;height:78px;background:#ececec"></div><div class="a" style="left:1888px;top:922px;width:2px;height:78px;background:#ececec"></div><div class="a" style="left:2208px;top:922px;width:2px;height:78px;background:#ececec"></div>
<div class="a t24" style="left:49px;top:948px;color:#aaa">7</div>
<svg style="left:155px;top:950px" width="24" height="20" fill="#68d3bb"><path d="M3.3 1.2a1.6 1.6 0 0 1 1.5-1.2h14.4a1.6 1.6 0 0 1 1.5 1.2l2.4 7v9.3a2.5 2.5 0 0 1-2.5 2.5h-17.2a2.5 2.5 0 0 1-2.5-2.5v-9.3z"/><path d="M0 9h7.3l1.5 3h6.4l1.5-3h7.3" stroke="#fff" stroke-width="1.6" fill="none"/></svg>
<div class="a t24" style="left:187px;top:949px;color:#333">律所管理</div>
<div class="a t24" style="left:474px;top:940px;width:86px;height:40px;line-height:40px;border-radius:4px;background:#eefaf7;color:#5ccdb3;padding-left:15px">2597</div>
<div class="a" style="left:794px;top:940px;width:158px;height:42px;border-radius:5px;background:#f1f8ef"></div>
<svg style="left:810px;top:948.5px" width="24" height="24"><circle cx="12" cy="12" r="10.5" stroke="#6dbf6a" stroke-width="3" fill="none"/><path d="M10.3 6.8v6.4h5" stroke="#6dbf6a" stroke-width="2.6" fill="none"/></svg>
<div class="a t24" style="left:841.5px;top:948px;color:#333">法律顾问</div>
<div class="a t24" style="left:1018.5px;top:948.2px;color:#333">肖某离婚案</div>
<svg style="left:1657.8000000000002px;top:941.5px" width="39" height="39" viewBox="0 0 39 39"><defs><clipPath id="cc1657_941"><circle cx="19.3" cy="20.2" r="19.2"/></clipPath><filter id="fcc1657_941"><feGaussianBlur stdDeviation="0.7"/></filter><radialGradient id="gcc1657_941" cx="50%" cy="55%" r="55%"><stop offset="0.6" stop-color="#f7f4ef"/><stop offset="1" stop-color="#b9aa9c"/></radialGradient></defs><g clip-path="url(#cc1657_941)"><rect width="39" height="41" fill="url(#gcc1657_941)"/><g filter="url(#fcc1657_941)"><path d="M2.5 30A18.5 18.5 0 0 1 21 1.8" stroke="#8a796b" stroke-width="7" fill="none" opacity=".7"/><path d="M21.5 1.8A18.5 18.5 0 0 1 30 4.2" stroke="#e5c04a" stroke-width="4.5" fill="none"/><path d="M30 4.5A18.5 18.5 0 0 1 35 10" stroke="#978a7e" stroke-width="4" fill="none" opacity=".7"/><path d="M35 10A18.5 18.5 0 0 1 37 14" stroke="#e2c35a" stroke-width="3" fill="none"/></g><ellipse cx="14.5" cy="11.5" rx="5" ry="3.6" fill="#cdbfb3" opacity=".7"/><ellipse cx="25.5" cy="12.5" rx="5" ry="3.6" fill="#cdbfb3" opacity=".7"/><ellipse cx="18.5" cy="23" rx="5" ry="4" fill="#efe4c8" opacity=".45"/><circle cx="14.8" cy="11.2" r="1.9" fill="#1f2f6e"/><circle cx="25.7" cy="12.3" r="1.9" fill="#1f2f6e"/><path d="M18.8 13.5h2.6l-1.3 1.6z" fill="#e59a98"/><path d="M8.8 30l7.5 3.2v3.6l-7 1.8z" fill="#cf3a30"/><path d="M29.2 31.2l-9.5 2.2v3.6l9 3z" fill="#cf3a30"/><circle cx="17.5" cy="35" r="1.7" fill="#1b1b1b"/></g></svg>
<div class="a t24" style="left:1704px;top:950px;color:#333">Shirley</div>
<svg style="left:2236.8px;top:947px" width="27" height="27"><rect width="26.4" height="26.5" rx="5.5" fill="#68d3bb"/><path d="M7.7 6.5h11a1.5 1.5 0 0 1 1.5 1.5v9.2l-3.3 3.3h-9.2a1.5 1.5 0 0 1-1.5-1.5v-11a1.5 1.5 0 0 1 1.5-1.5z" fill="#fff"/><path d="M10.3 12.6l2.4 2.6l4.2-3.3" stroke="#68d3bb" stroke-width="1.4" fill="none" stroke-linecap="round"/></svg>
<div class="a t24" style="left:2276.5px;top:948px;color:#333">案件</div>
<div class="a" style="left:0;top:1000px;width:2320px;height:2px;background:#ececec"></div>
<div class="a" style="left:0;top:1002px;width:2320px;height:78px;background:#fff"></div>
<div class="a" style="left:128px;top:1002px;width:2px;height:78px;background:#ececec"></div><div class="a" style="left:448px;top:1002px;width:2px;height:78px;background:#ececec"></div><div class="a" style="left:768px;top:1002px;width:2px;height:78px;background:#ececec"></div><div class="a" style="left:992px;top:1002px;width:2px;height:78px;background:#ececec"></div><div class="a" style="left:1632px;top:1002px;width:2px;height:78px;background:#ececec"></div><div class="a" style="left:1888px;top:1002px;width:2px;height:78px;background:#ececec"></div><div class="a" style="left:2208px;top:1002px;width:2px;height:78px;background:#ececec"></div>
<div class="a t24" style="left:49px;top:1028px;color:#aaa">8</div>
<svg style="left:155px;top:1030px" width="24" height="20" fill="#68d3bb"><path d="M3.3 1.2a1.6 1.6 0 0 1 1.5-1.2h14.4a1.6 1.6 0 0 1 1.5 1.2l2.4 7v9.3a2.5 2.5 0 0 1-2.5 2.5h-17.2a2.5 2.5 0 0 1-2.5-2.5v-9.3z"/><path d="M0 9h7.3l1.5 3h6.4l1.5-3h7.3" stroke="#fff" stroke-width="1.6" fill="none"/></svg>
<div class="a t24" style="left:187px;top:1029px;color:#333">律所管理</div>
<div class="a t24" style="left:474px;top:1020px;width:86px;height:40px;line-height:40px;border-radius:4px;background:#eefaf7;color:#5ccdb3;padding-left:15px">2599</div>
<div class="a" style="left:794px;top:1020px;width:158px;height:42px;border-radius:5px;background:#f1f8ef"></div>
<svg style="left:810px;top:1028.5px" width="24" height="24"><circle cx="12" cy="12" r="10.5" stroke="#6dbf6a" stroke-width="3" fill="none"/><path d="M10.3 6.8v6.4h5" stroke="#6dbf6a" stroke-width="2.6" fill="none"/></svg>
<div class="a t24" style="left:841.5px;top:1028px;color:#333">法律顾问</div>
<div class="a t24" style="left:1018.5px;top:1028.2px;color:#333">张某离婚案</div>
<svg style="left:1657.8000000000002px;top:1021.5px" width="39" height="39" viewBox="0 0 39 39"><defs><clipPath id="cc1657_1021"><circle cx="19.3" cy="20.2" r="19.2"/></clipPath><filter id="fcc1657_1021"><feGaussianBlur stdDeviation="0.7"/></filter><radialGradient id="gcc1657_1021" cx="50%" cy="55%" r="55%"><stop offset="0.6" stop-color="#f7f4ef"/><stop offset="1" stop-color="#b9aa9c"/></radialGradient></defs><g clip-path="url(#cc1657_1021)"><rect width="39" height="41" fill="url(#gcc1657_1021)"/><g filter="url(#fcc1657_1021)"><path d="M2.5 30A18.5 18.5 0 0 1 21 1.8" stroke="#8a796b" stroke-width="7" fill="none" opacity=".7"/><path d="M21.5 1.8A18.5 18.5 0 0 1 30 4.2" stroke="#e5c04a" stroke-width="4.5" fill="none"/><path d="M30 4.5A18.5 18.5 0 0 1 35 10" stroke="#978a7e" stroke-width="4" fill="none" opacity=".7"/><path d="M35 10A18.5 18.5 0 0 1 37 14" stroke="#e2c35a" stroke-width="3" fill="none"/></g><ellipse cx="14.5" cy="11.5" rx="5" ry="3.6" fill="#cdbfb3" opacity=".7"/><ellipse cx="25.5" cy="12.5" rx="5" ry="3.6" fill="#cdbfb3" opacity=".7"/><ellipse cx="18.5" cy="23" rx="5" ry="4" fill="#efe4c8" opacity=".45"/><circle cx="14.8" cy="11.2" r="1.9" fill="#1f2f6e"/><circle cx="25.7" cy="12.3" r="1.9" fill="#1f2f6e"/><path d="M18.8 13.5h2.6l-1.3 1.6z" fill="#e59a98"/><path d="M8.8 30l7.5 3.2v3.6l-7 1.8z" fill="#cf3a30"/><path d="M29.2 31.2l-9.5 2.2v3.6l9 3z" fill="#cf3a30"/><circle cx="17.5" cy="35" r="1.7" fill="#1b1b1b"/></g></svg>
<div class="a t24" style="left:1704px;top:1030px;color:#333">Shirley</div>
<div class="a t24" style="left:1913.5px;top:1029px;color:#eb5a4b">2019年6月15日</div>
<svg style="left:2236.8px;top:1027px" width="27" height="27"><rect width="26.4" height="26.5" rx="5.5" fill="#68d3bb"/><path d="M7.7 6.5h11a1.5 1.5 0 0 1 1.5 1.5v9.2l-3.3 3.3h-9.2a1.5 1.5 0 0 1-1.5-1.5v-11a1.5 1.5 0 0 1 1.5-1.5z" fill="#fff"/><path d="M10.3 12.6l2.4 2.6l4.2-3.3" stroke="#68d3bb" stroke-width="1.4" fill="none" stroke-linecap="round"/></svg>
<div class="a t24" style="left:2276.5px;top:1028px;color:#333">案件</div>
<div class="a" style="left:0;top:1080px;width:2320px;height:2px;background:#ececec"></div>
<div class="a" style="left:0;top:1082px;width:2320px;height:78px;background:#fff"></div>
<div class="a" style="left:128px;top:1082px;width:2px;height:78px;background:#ececec"></div><div class="a" style="left:448px;top:1082px;width:2px;height:78px;background:#ececec"></div><div class="a" style="left:768px;top:1082px;width:2px;height:78px;background:#ececec"></div><div class="a" style="left:992px;top:1082px;width:2px;height:78px;background:#ececec"></div><div class="a" style="left:1632px;top:1082px;width:2px;height:78px;background:#ececec"></div><div class="a" style="left:1888px;top:1082px;width:2px;height:78px;background:#ececec"></div><div class="a" style="left:2208px;top:1082px;width:2px;height:78px;background:#ececec"></div>
<div class="a t24" style="left:49px;top:1108px;color:#aaa">9</div>
<svg style="left:155px;top:1110px" width="24" height="20" fill="#68d3bb"><path d="M3.3 1.2a1.6 1.6 0 0 1 1.5-1.2h14.4a1.6 1.6 0 0 1 1.5 1.2l2.4 7v9.3a2.5 2.5 0 0 1-2.5 2.5h-17.2a2.5 2.5 0 0 1-2.5-2.5v-9.3z"/><path d="M0 9h7.3l1.5 3h6.4l1.5-3h7.3" stroke="#fff" stroke-width="1.6" fill="none"/></svg>
<div class="a t24" style="left:187px;top:1109px;color:#333">石油行业采购管理</div>
<div class="a t24" style="left:474px;top:1100px;width:86px;height:40px;line-height:40px;border-radius:4px;background:#eefaf7;color:#5ccdb3;padding-left:15px">2617</div>
<div class="a" style="left:794px;top:1100px;width:158px;height:42px;border-radius:5px;background:#edf9f6"></div>
<svg style="left:810px;top:1108.5px" width="24" height="24"><circle cx="12" cy="12" r="10.5" stroke="#68d3bb" stroke-width="3" fill="none"/><path d="M7.5 12h9" stroke="#68d3bb" stroke-width="2.6"/></svg>
<div class="a t24" style="left:841.5px;top:1108px;color:#333">提出需求</div>
<div class="a t24" style="left:1018.5px;top:1108.2px;color:#333">陆地使用TEG27号材料</div>
<svg style="left:1657.8000000000002px;top:1101.5px" width="39" height="39" viewBox="0 0 39 39"><defs><clipPath id="cc1657_1101"><circle cx="19.3" cy="20.2" r="19.2"/></clipPath><filter id="fcc1657_1101"><feGaussianBlur stdDeviation="0.7"/></filter><radialGradient id="gcc1657_1101" cx="50%" cy="55%" r="55%"><stop offset="0.6" stop-color="#f7f4ef"/><stop offset="1" stop-color="#b9aa9c"/></radialGradient></defs><g clip-path="url(#cc1657_1101)"><rect width="39" height="41" fill="url(#gcc1657_1101)"/><g filter="url(#fcc1657_1101)"><path d="M2.5 30A18.5 18.5 0 0 1 21 1.8" stroke="#8a796b" stroke-width="7" fill="none" opacity=".7"/><path d="M21.5 1.8A18.5 18.5 0 0 1 30 4.2" stroke="#e5c04a" stroke-width="4.5" fill="none"/><path d="M30 4.5A18.5 18.5 0 0 1 35 10" stroke="#978a7e" stroke-width="4" fill="none" opacity=".7"/><path d="M35 10A18.5 18.5 0 0 1 37 14" stroke="#e2c35a" stroke-width="3" fill="none"/></g><ellipse cx="14.5" cy="11.5" rx="5" ry="3.6" fill="#cdbfb3" opacity=".7"/><ellipse cx="25.5" cy="12.5" rx="5" ry="3.6" fill="#cdbfb3" opacity=".7"/><ellipse cx="18.5" cy="23" rx="5" ry="4" fill="#efe4c8" opacity=".45"/><circle cx="14.8" cy="11.2" r="1.9" fill="#1f2f6e"/><circle cx="25.7" cy="12.3" r="1.9" fill="#1f2f6e"/><path d="M18.8 13.5h2.6l-1.3 1.6z" fill="#e59a98"/><path d="M8.8 30l7.5 3.2v3.6l-7 1.8z" fill="#cf3a30"/><path d="M29.2 31.2l-9.5 2.2v3.6l9 3z" fill="#cf3a30"/><circle cx="17.5" cy="35" r="1.7" fill="#1b1b1b"/></g></svg>
<div class="a t24" style="left:1704px;top:1110px;color:#333">Shirley</div>
<svg style="left:2236.8px;top:1107px" width="27" height="27"><rect width="26.4" height="26.5" rx="5.5" fill="#62b766"/><path d="M13.2 5.9L15.4 10L20.9 11.7L17.6 15.6L18.2 20.6L13.2 18.8L8.3 20.6L8.9 15.6L5.6 11.7L11 10Z" fill="#fff" stroke="#fff" stroke-width="0.9" stroke-linejoin="round"/></svg>
<div class="a t24" style="left:2276.5px;top:1108px;color:#333">石油采购</div>
<div class="a" style="left:0;top:1160px;width:2320px;height:2px;background:#ececec"></div>
<div class="a" style="left:0;top:1162px;width:2320px;height:78px;background:#fff"></div>
<div class="a" style="left:128px;top:1162px;width:2px;height:78px;background:#ececec"></div><div class="a" style="left:448px;top:1162px;width:2px;height:78px;background:#ececec"></div><div class="a" style="left:768px;top:1162px;width:2px;height:78px;background:#ececec"></div><div class="a" style="left:992px;top:1162px;width:2px;height:78px;background:#ececec"></div><div class="a" style="left:1632px;top:1162px;width:2px;height:78px;background:#ececec"></div><div class="a" style="left:1888px;top:1162px;width:2px;height:78px;background:#ececec"></div><div class="a" style="left:2208px;top:1162px;width:2px;height:78px;background:#ececec"></div>
<div class="a t24" style="left:49px;top:1188px;color:#aaa">10</div>
<svg style="left:155px;top:1190px" width="24" height="20" fill="#68d3bb"><path d="M3.3 1.2a1.6 1.6 0 0 1 1.5-1.2h14.4a1.6 1.6 0 0 1 1.5 1.2l2.4 7v9.3a2.5 2.5 0 0 1-2.5 2.5h-17.2a2.5 2.5 0 0 1-2.5-2.5v-9.3z"/><path d="M0 9h7.3l1.5 3h6.4l1.5-3h7.3" stroke="#fff" stroke-width="1.6" fill="none"/></svg>
<div class="a t24" style="left:187px;top:1189px;color:#333">石油行业采购管理</div>
<div class="a t24" style="left:474px;top:1180px;width:86px;height:40px;line-height:40px;border-radius:4px;background:#eefaf7;color:#5ccdb3;padding-left:15px">2620</div>
<div class="a" style="left:794px;top:1180px;width:173px;height:42px;border-radius:5px;background:#edf9f6"></div>
<svg style="left:810px;top:1188.5px" width="24" height="24"><circle cx="12" cy="12" r="10.5" stroke="#68d3bb" stroke-width="3" fill="none"/><path d="M10.3 6.8v6.4h5" stroke="#68d3bb" stroke-width="2.6" fill="none"/></svg>
<div class="a t24" style="left:841.5px;top:1188px;color:#333">订单已...</div>
<div class="a t24" style="left:1018.5px;top:1188.2px;color:#333">海油BR-837、BY-539库存订单</div>
<svg style="left:1657.8000000000002px;top:1181.5px" width="39" height="39" viewBox="0 0 39 39"><defs><clipPath id="cc1657_1181"><circle cx="19.3" cy="20.2" r="19.2"/></clipPath><filter id="fcc1657_1181"><feGaussianBlur stdDeviation="0.7"/></filter><radialGradient id="gcc1657_1181" cx="50%" cy="55%" r="55%"><stop offset="0.6" stop-color="#f7f4ef"/><stop offset="1" stop-color="#b9aa9c"/></radialGradient></defs><g clip-path="url(#cc1657_1181)"><rect width="39" height="41" fill="url(#gcc1657_1181)"/><g filter="url(#fcc1657_1181)"><path d="M2.5 30A18.5 18.5 0 0 1 21 1.8" stroke="#8a796b" stroke-width="7" fill="none" opacity=".7"/><path d="M21.5 1.8A18.5 18.5 0 0 1 30 4.2" stroke="#e5c04a" stroke-width="4.5" fill="none"/><path d="M30 4.5A18.5 18.5 0 0 1 35 10" stroke="#978a7e" stroke-width="4" fill="none" opacity=".7"/><path d="M35 10A18.5 18.5 0 0 1 37 14" stroke="#e2c35a" stroke-width="3" fill="none"/></g><ellipse cx="14.5" cy="11.5" rx="5" ry="3.6" fill="#cdbfb3" opacity=".7"/><ellipse cx="25.5" cy="12.5" rx="5" ry="3.6" fill="#cdbfb3" opacity=".7"/><ellipse cx="18.5" cy="23" rx="5" ry="4" fill="#efe4c8" opacity=".45"/><circle cx="14.8" cy="11.2" r="1.9" fill="#1f2f6e"/><circle cx="25.7" cy="12.3" r="1.9" fill="#1f2f6e"/><path d="M18.8 13.5h2.6l-1.3 1.6z" fill="#e59a98"/><path d="M8.8 30l7.5 3.2v3.6l-7 1.8z" fill="#cf3a30"/><path d="M29.2 31.2l-9.5 2.2v3.6l9 3z" fill="#cf3a30"/><circle cx="17.5" cy="35" r="1.7" fill="#1b1b1b"/></g></svg>
<div class="a t24" style="left:1704px;top:1190px;color:#333">Shirley</div>
<svg style="left:2236.8px;top:1187px" width="27" height="27"><rect width="26.4" height="26.5" rx="5.5" fill="#62b766"/><path d="M13.2 5.9L15.4 10L20.9 11.7L17.6 15.6L18.2 20.6L13.2 18.8L8.3 20.6L8.9 15.6L5.6 11.7L11 10Z" fill="#fff" stroke="#fff" stroke-width="0.9" stroke-linejoin="round"/></svg>
<div class="a t24" style="left:2276.5px;top:1188px;color:#333">石油采购</div>
<div class="a" style="left:0;top:1240px;width:2320px;height:2px;background:#ececec"></div>
<div class="a" style="left:0;top:1242px;width:2320px;height:78px;background:#fff"></div>
<div class="a" style="left:128px;top:1242px;width:2px;height:78px;background:#ececec"></div><div class="a" style="left:448px;top:1242px;width:2px;height:78px;background:#ececec"></div><div class="a" style="left:768px;top:1242px;width:2px;height:78px;background:#ececec"></div><div class="a" style="left:992px;top:1242px;width:2px;height:78px;background:#ececec"></div><div class="a" style="left:1632px;top:1242px;width:2px;height:78px;background:#ececec"></div><div class="a" style="left:1888px;top:1242px;width:2px;height:78px;background:#ececec"></div><div class="a" style="left:2208px;top:1242px;width:2px;height:78px;background:#ececec"></div>
<div class="a t24" style="left:49px;top:1268px;color:#aaa">11</div>
<svg style="left:155px;top:1270px" width="24" height="20" fill="#68d3bb"><path d="M3.3 1.2a1.6 1.6 0 0 1 1.5-1.2h14.4a1.6 1.6 0 0 1 1.5 1.2l2.4 7v9.3a2.5 2.5 0 0 1-2.5 2.5h-17.2a2.5 2.5 0 0 1-2.5-2.5v-9.3z"/><path d="M0 9h7.3l1.5 3h6.4l1.5-3h7.3" stroke="#fff" stroke-width="1.6" fill="none"/></svg>
<div class="a t24" style="left:187px;top:1269px;color:#333">市场运营</div>
<div class="a t24" style="left:474px;top:1260px;width:160px;height:40px;line-height:40px;border-radius:4px;background:#eefaf7;color:#5ccdb3;padding-left:15px">market2627</div>
<div class="a" style="left:794px;top:1260px;width:134px;height:42px;border-radius:5px;background:#fef5ea"></div>
<svg style="left:810px;top:1268.5px" width="24" height="24"><circle cx="12" cy="12" r="10.5" stroke="#f2a33a" stroke-width="3" fill="none"/><path d="M10.3 6.8v6.4h5" stroke="#f2a33a" stroke-width="2.6" fill="none"/></svg>
<div class="a t24" style="left:841.5px;top:1268px;color:#333">进行中</div>
<div class="a t24" style="left:1018.5px;top:1268.2px;color:#333">OKR背后的秘密</div>
<svg style="left:1657.8000000000002px;top:1261.5px" width="39" height="39" viewBox="0 0 39 39"><defs><clipPath id="cc1657_1261"><circle cx="19.3" cy="20.2" r="19.2"/></clipPath><filter id="fcc1657_1261"><feGaussianBlur stdDeviation="0.7"/></filter><radialGradient id="gcc1657_1261" cx="50%" cy="55%" r="55%"><stop offset="0.6" stop-color="#f7f4ef"/><stop offset="1" stop-color="#b9aa9c"/></radialGradient></defs><g clip-path="url(#cc1657_1261)"><rect width="39" height="41" fill="url(#gcc1657_1261)"/><g filter="url(#fcc1657_1261)"><path d="M2.5 30A18.5 18.5 0 0 1 21 1.8" stroke="#8a796b" stroke-width="7" fill="none" opacity=".7"/><path d="M21.5 1.8A18.5 18.5 0 0 1 30 4.2" stroke="#e5c04a" stroke-width="4.5" fill="none"/><path d="M30 4.5A18.5 18.5 0 0 1 35 10" stroke="#978a7e" stroke-width="4" fill="none" opacity=".7"/><path d="M35 10A18.5 18.5 0 0 1 37 14" stroke="#e2c35a" stroke-width="3" fill="none"/></g><ellipse cx="14.5" cy="11.5" rx="5" ry="3.6" fill="#cdbfb3" opacity=".7"/><ellipse cx="25.5" cy="12.5" rx="5" ry="3.6" fill="#cdbfb3" opacity=".7"/><ellipse cx="18.5" cy="23" rx="5" ry="4" fill="#efe4c8" opacity=".45"/><circle cx="14.8" cy="11.2" r="1.9" fill="#1f2f6e"/><circle cx="25.7" cy="12.3" r="1.9" fill="#1f2f6e"/><path d="M18.8 13.5h2.6l-1.3 1.6z" fill="#e59a98"/><path d="M8.8 30l7.5 3.2v3.6l-7 1.8z" fill="#cf3a30"/><path d="M29.2 31.2l-9.5 2.2v3.6l9 3z" fill="#cf3a30"/><circle cx="17.5" cy="35" r="1.7" fill="#1b1b1b"/></g></svg>
<div class="a t24" style="left:1704px;top:1270px;color:#333">Shirley</div>
<div class="a t24" style="left:1913.5px;top:1269px;color:#eb5a4b">2019年7月30日</div>
<svg style="left:2236.8px;top:1267px" width="27" height="27"><rect width="26.4" height="26.5" rx="5.5" fill="#68d3bb"/><path d="M7.7 6.5h11a1.5 1.5 0 0 1 1.5 1.5v9.2l-3.3 3.3h-9.2a1.5 1.5 0 0 1-1.5-1.5v-11a1.5 1.5 0 0 1 1.5-1.5z" fill="#fff"/><path d="M10.3 12.6l2.4 2.6l4.2-3.3" stroke="#68d3bb" stroke-width="1.4" fill="none" stroke-linecap="round"/></svg>
<div class="a t24" style="left:2276.5px;top:1268px;color:#333">任务</div>
<div class="a" style="left:0;top:1320px;width:2320px;height:2px;background:#ececec"></div>
<div class="a" style="left:0;top:1322px;width:2320px;height:78px;background:#fff"></div>
<div class="a" style="left:128px;top:1322px;width:2px;height:78px;background:#ececec"></div><div class="a" style="left:448px;top:1322px;width:2px;height:78px;background:#ececec"></div><div class="a" style="left:768px;top:1322px;width:2px;height:78px;background:#ececec"></div><div class="a" style="left:992px;top:1322px;width:2px;height:78px;background:#ececec"></div><div class="a" style="left:1632px;top:1322px;width:2px;height:78px;background:#ececec"></div><div class="a" style="left:1888px;top:1322px;width:2px;height:78px;background:#ececec"></div><div class="a" style="left:2208px;top:1322px;width:2px;height:78px;background:#ececec"></div>
<div class="a t24" style="left:49px;top:1348px;color:#aaa">12</div>
<svg style="left:155px;top:1350px" width="24" height="20" fill="#68d3bb"><path d="M3.3 1.2a1.6 1.6 0 0 1 1.5-1.2h14.4a1.6 1.6 0 0 1 1.5 1.2l2.4 7v9.3a2.5 2.5 0 0 1-2.5 2.5h-17.2a2.5 2.5 0 0 1-2.5-2.5v-9.3z"/><path d="M0 9h7.3l1.5 3h6.4l1.5-3h7.3" stroke="#fff" stroke-width="1.6" fill="none"/></svg>
<div class="a t24" style="left:187px;top:1349px;color:#333">市场运营</div>
<div class="a t24" style="left:474px;top:1340px;width:160px;height:40px;line-height:40px;border-radius:4px;background:#eefaf7;color:#5ccdb3;padding-left:15px">market2682</div>
<div class="a" style="left:794px;top:1340px;width:134px;height:42px;border-radius:5px;background:#fef5ea"></div>
<svg style="left:810px;top:1348.5px" width="24" height="24"><circle cx="12" cy="12" r="10.5" stroke="#f2a33a" stroke-width="3" fill="none"/><path d="M10.3 6.8v6.4h5" stroke="#f2a33a" stroke-width="2.6" fill="none"/></svg>
<div class="a t24" style="left:841.5px;top:1348px;color:#333">进行中</div>
<div class="a t24" style="left:1018.5px;top:1348.2px;color:#333">电子书</div>
<svg style="left:1657.8000000000002px;top:1341.5px" width="39" height="39" viewBox="0 0 39 39"><defs><clipPath id="cc1657_1341"><circle cx="19.3" cy="20.2" r="19.2"/></clipPath><filter id="fcc1657_1341"><feGaussianBlur stdDeviation="0.7"/></filter><radialGradient id="gcc1657_1341" cx="50%" cy="55%" r="55%"><stop offset="0.6" stop-color="#f7f4ef"/><stop offset="1" stop-color="#b9aa9c"/></radialGradient></defs><g clip-path="url(#cc1657_1341)"><rect width="39" height="41" fill="url(#gcc1657_1341)"/><g filter="url(#fcc1657_1341)"><path d="M2.5 30A18.5 18.5 0 0 1 21 1.8" stroke="#8a796b" stroke-width="7" fill="none" opacity=".7"/><path d="M21.5 1.8A18.5 18.5 0 0 1 30 4.2" stroke="#e5c04a" stroke-width="4.5" fill="none"/><path d="M30 4.5A18.5 18.5 0 0 1 35 10" stroke="#978a7e" stroke-width="4" fill="none" opacity=".7"/><path d="M35 10A18.5 18.5 0 0 1 37 14" stroke="#e2c35a" stroke-width="3" fill="none"/></g><ellipse cx="14.5" cy="11.5" rx="5" ry="3.6" fill="#cdbfb3" opacity=".7"/><ellipse cx="25.5" cy="12.5" rx="5" ry="3.6" fill="#cdbfb3" opacity=".7"/><ellipse cx="18.5" cy="23" rx="5" ry="4" fill="#efe4c8" opacity=".45"/><circle cx="14.8" cy="11.2" r="1.9" fill="#1f2f6e"/><circle cx="25.7" cy="12.3" r="1.9" fill="#1f2f6e"/><path d="M18.8 13.5h2.6l-1.3 1.6z" fill="#e59a98"/><path d="M8.8 30l7.5 3.2v3.6l-7 1.8z" fill="#cf3a30"/><path d="M29.2 31.2l-9.5 2.2v3.6l9 3z" fill="#cf3a30"/><circle cx="17.5" cy="35" r="1.7" fill="#1b1b1b"/></g></svg>
<div class="a t24" style="left:1704px;top:1350px;color:#333">Shirley</div>
<div class="a t24" style="left:1913.5px;top:1349px;color:#eb5a4b">2019年6月30日</div>
<svg style="left:2236.8px;top:1347px" width="27" height="27"><rect width="26.5" height="27" rx="5.5" fill="#5db8f6"/><rect x="6.4" y="5.7" width="13.7" height="11.9" rx="1.2" fill="none" stroke="#fff" stroke-width="1.5"/><circle cx="13.2" cy="17.4" r=".9" fill="#fff"/><rect x="9.6" y="20.2" width="7.2" height="1.6" rx=".5" fill="#fff"/></svg>
<div class="a t24" style="left:2276.5px;top:1348px;color:#333">内容</div>
</div>
<div class="a" style="left:0;top:1312px;width:2876px;height:96px;background:linear-gradient(to bottom,rgba(0,0,0,0) 0%,rgba(0,0,0,0.012) 40%,rgba(0,0,0,0.035) 70%,rgba(0,0,0,0.075) 100%);pointer-events:none"></div>
<div class="a" style="left:2864px;top:164px;width:8px;height:466px;border-radius:4px;background:#dcdcdc"></div>
<div class="a" style="left:520px;top:1398px;width:2320px;height:10px;background:#e6e6e6;border-radius:5px 5px 0 0"></div>
<div class="a" style="left:520px;top:1398px;width:2182px;height:10px;background:#cdcdcd;border-radius:6px 6px 0 0"></div>
</body></html>
